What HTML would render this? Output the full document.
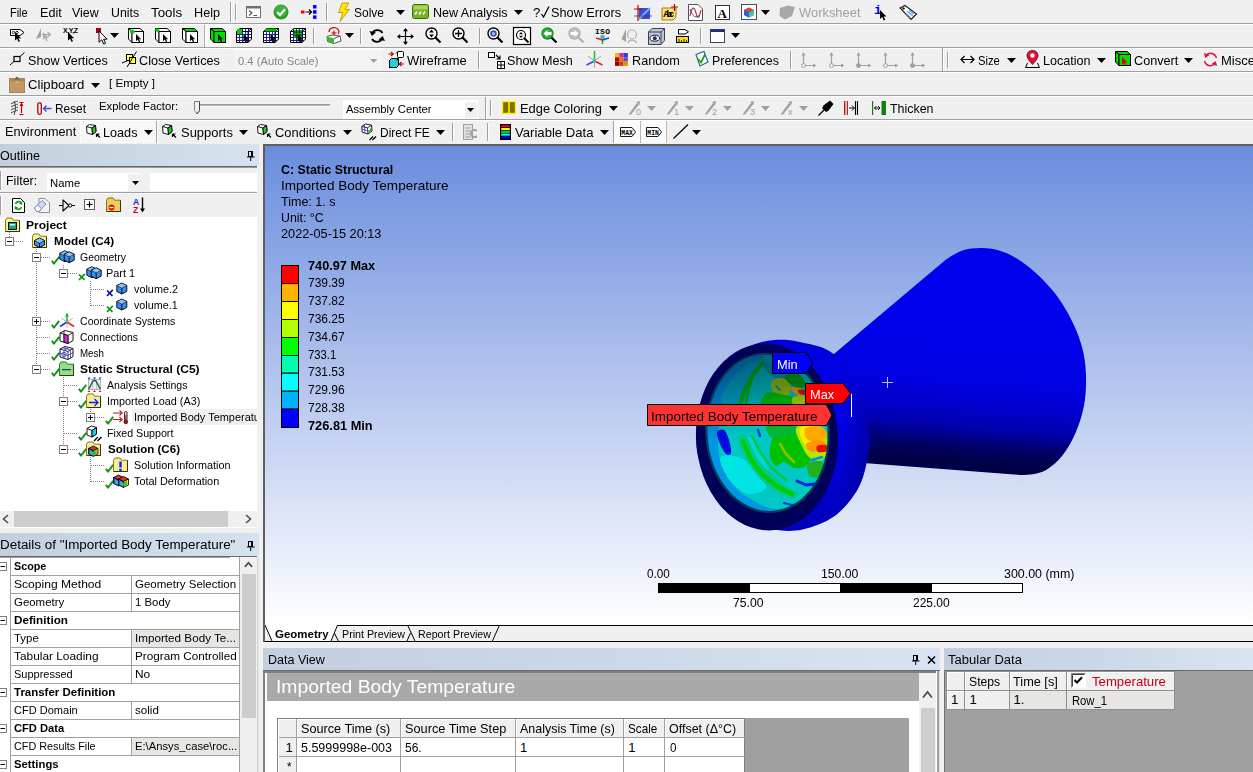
<!DOCTYPE html>
<html><head><meta charset="utf-8"><title>Mechanical</title>
<style>
html,body{margin:0;padding:0;}
body{width:1253px;height:772px;overflow:hidden;background:#f0f0f0;position:relative;font-family:"Liberation Sans",sans-serif;}
.r{position:absolute;display:block;}
.t{position:absolute;white-space:pre;transform-origin:0 0;display:block;}
</style></head><body>
<div class="r" style="left:0px;top:23px;width:1253px;height:1px;background:#a0a0a0;"></div>
<div class="r" style="left:0px;top:24px;width:1253px;height:1px;background:#ffffff;"></div>
<div class="r" style="left:0px;top:47px;width:1253px;height:1px;background:#a0a0a0;"></div>
<div class="r" style="left:0px;top:48px;width:1253px;height:1px;background:#ffffff;"></div>
<div class="r" style="left:0px;top:71px;width:1253px;height:1px;background:#a0a0a0;"></div>
<div class="r" style="left:0px;top:72px;width:1253px;height:1px;background:#ffffff;"></div>
<div class="r" style="left:0px;top:95px;width:1253px;height:1px;background:#a0a0a0;"></div>
<div class="r" style="left:0px;top:96px;width:1253px;height:1px;background:#ffffff;"></div>
<div class="r" style="left:0px;top:119px;width:1253px;height:1px;background:#a0a0a0;"></div>
<div class="r" style="left:0px;top:120px;width:1253px;height:1px;background:#ffffff;"></div>
<span class="t" style="left:10.00px;top:6.00px;font:normal 13px/13px 'Liberation Sans', sans-serif;color:#000;transform:scaleX(0.8406);">File</span>
<span class="t" style="left:39.60px;top:6.00px;font:normal 13px/13px 'Liberation Sans', sans-serif;color:#000;transform:scaleX(0.9698);">Edit</span>
<span class="t" style="left:72.30px;top:6.00px;font:normal 13px/13px 'Liberation Sans', sans-serif;color:#000;transform:scaleX(0.9536);">View</span>
<span class="t" style="left:110.60px;top:6.00px;font:normal 13px/13px 'Liberation Sans', sans-serif;color:#000;transform:scaleX(0.9485);">Units</span>
<span class="t" style="left:150.70px;top:6.00px;font:normal 13px/13px 'Liberation Sans', sans-serif;color:#000;transform:scaleX(1.0239);">Tools</span>
<span class="t" style="left:193.60px;top:6.00px;font:normal 13px/13px 'Liberation Sans', sans-serif;color:#000;transform:scaleX(0.9720);">Help</span>
<div class="r" style="left:230px;top:2px;width:1px;height:20px;background:#a0a0a0;"></div>
<div class="r" style="left:231px;top:2px;width:1px;height:20px;background:#fff;"></div>
<div class="r" style="left:235px;top:4px;width:1px;height:16px;background:#a0a0a0;"></div>
<div class="r" style="left:236px;top:4px;width:1px;height:16px;background:#fff;"></div>
<svg class="r" style="left:246px;top:6px;overflow:visible;" width="15" height="12" viewBox="0 0 15 12"><rect x="0.5" y="0.5" width="14" height="11" fill="#fff" stroke="#707070"/><rect x="0.5" y="0.5" width="14" height="2" fill="#707070"/><path d="M3 4.5L6 7L3 9.5M7.5 9.5H11" stroke="#505050" stroke-width="1.2" fill="none"/></svg>
<svg class="r" style="left:273px;top:4px;overflow:visible;" width="16" height="16" viewBox="0 0 16 16"><circle cx="8" cy="8" r="7.5" fill="#2a9a2a"/><circle cx="8" cy="7" r="6" fill="#4fc24f" opacity="0.6"/><path d="M4.2 8.2L7 11L12 5.2" stroke="#fff" stroke-width="2.2" fill="none"/></svg>
<svg class="r" style="left:301px;top:5px;overflow:visible;" width="16" height="14" viewBox="0 0 16 14"><rect x="0" y="5.5" width="3.5" height="3" fill="#ff0000"/><path d="M4.5 7H10M8 4.5L10.5 7L8 9.5" stroke="#000" stroke-width="1.2" fill="none"/><rect x="12" y="0" width="3.5" height="3.5" fill="#0000ff"/><rect x="12" y="5.2" width="3.5" height="3.5" fill="#0000ff"/><rect x="12" y="10.4" width="3.5" height="3.5" fill="#0000ff"/></svg>
<div class="r" style="left:326px;top:3px;width:1px;height:18px;background:#a0a0a0;"></div>
<div class="r" style="left:327px;top:3px;width:1px;height:18px;background:#fff;"></div>
<svg class="r" style="left:337px;top:3px;overflow:visible;" width="14" height="19" viewBox="0 0 14 19"><path d="M5 0H12L8 6.5H12.5L3 18.5L5.8 9.5H1.5Z" fill="#ffe800" stroke="#b89000" stroke-width="0.8"/></svg>
<span class="t" style="left:353.60px;top:6.00px;font:normal 13px/13px 'Liberation Sans', sans-serif;color:#000;transform:scaleX(0.9200);">Solve</span>
<svg class="r" style="left:395.8px;top:10px;" width="9" height="5" viewBox="0 0 9 5"><path d="M0 0H9L4.5 5Z" fill="#000"/></svg>
<svg class="r" style="left:412px;top:4px;overflow:visible;" width="17" height="15" viewBox="0 0 17 15"><rect x="0.5" y="0.5" width="16" height="14" rx="2" fill="#78b41e" stroke="#3c6e0a"/><rect x="1.5" y="1.5" width="14" height="4" fill="#a8d850"/><path d="M3 10.5L5 7.5M7 10.5L9 7.5M11 10.5L13 7.5" stroke="#fff" stroke-width="1.5"/></svg>
<span class="t" style="left:432.50px;top:6.00px;font:normal 13px/13px 'Liberation Sans', sans-serif;color:#000;transform:scaleX(0.9636);">New Analysis</span>
<svg class="r" style="left:513.5px;top:10px;" width="9" height="5" viewBox="0 0 9 5"><path d="M0 0H9L4.5 5Z" fill="#000"/></svg>
<span class="t" style="left:533.00px;top:6.00px;font:normal 13px/13px 'Liberation Sans', sans-serif;color:#000;transform:scaleX(1.0000);">?</span>
<svg class="r" style="left:541px;top:6px;overflow:visible;" width="9" height="12" viewBox="0 0 9 12"><path d="M0.5 8L2.5 11L8 0.5" stroke="#000" stroke-width="1.3" fill="none"/></svg>
<span class="t" style="left:550.50px;top:6.00px;font:normal 13px/13px 'Liberation Sans', sans-serif;color:#000;transform:scaleX(0.9790);">Show Errors</span>
<svg class="r" style="left:634px;top:5px;overflow:visible;" width="18" height="16" viewBox="0 0 18 16"><rect x="5" y="3" width="11" height="11" fill="#3050d0"/><path d="M5 14L16 3" stroke="#80a0ff" stroke-width="2"/><path d="M0 4H8M4 0V16" stroke="#c00000" stroke-width="1.2"/><path d="M0 11H18" stroke="#404040" stroke-width="0.8"/></svg>
<svg class="r" style="left:661px;top:4px;overflow:visible;" width="17" height="17" viewBox="0 0 17 17"><path d="M1 4H15V13L12 16H1Z" fill="#ffe070" stroke="#a08000"/><text x="2" y="13" font-size="9" font-family="Liberation Sans" font-weight="bold" fill="#000" textLength="11">Abc</text><path d="M10 3H17M13.5 0V7" stroke="#c00000" stroke-width="1.2"/></svg>
<svg class="r" style="left:688px;top:4px;overflow:visible;" width="15" height="17" viewBox="0 0 15 17"><path d="M0.5 0.5H10L14.5 5V16.5H0.5Z" fill="#fff" stroke="#505050"/><path d="M2 12C4 2 6 2 8 9S11 14 13 6" stroke="#d03030" stroke-width="1.2" fill="none"/><path d="M2 5C5 14 8 14 12 11" stroke="#3050c0" stroke-width="1" fill="none"/></svg>
<svg class="r" style="left:715px;top:5px;overflow:visible;" width="15" height="15" viewBox="0 0 15 15"><rect x="0.5" y="0.5" width="14" height="14" fill="#fff" stroke="#303030"/><text x="2.5" y="12.5" font-size="13" font-family="Liberation Serif" font-weight="bold" fill="#000">A</text></svg>
<svg class="r" style="left:741px;top:4px;overflow:visible;" width="16" height="16" viewBox="0 0 16 16"><rect x="0.5" y="0.5" width="15" height="15" fill="#fff" stroke="#505050"/><path d="M3 6L8 3.5L13 6V11L8 13.5L3 11Z" fill="#30a030"/><path d="M3 6L8 3.5L13 6L8 8.5Z" fill="#e04040"/><path d="M3 6L8 8.5V13.5L3 11Z" fill="#3060e0"/><path d="M8 8.5L13 6V11L8 13.5Z" fill="#40c0c0"/></svg>
<svg class="r" style="left:761px;top:10px;" width="9" height="5" viewBox="0 0 9 5"><path d="M0 0H9L4.5 5Z" fill="#000"/></svg>
<svg class="r" style="left:779px;top:5px;overflow:visible;" width="17" height="15" viewBox="0 0 17 15"><path d="M1 3L9 0.5L16 2L13 11L6 14.5L0.5 11Z" fill="#a8a8a8"/></svg>
<span class="t" style="left:799.00px;top:6.00px;font:normal 13px/13px 'Liberation Sans', sans-serif;color:#a0a0a0;transform:scaleX(0.9939);">Worksheet</span>
<svg class="r" style="left:874px;top:4px;overflow:visible;" width="16" height="17" viewBox="0 0 16 17"><text x="0" y="10" font-size="13" font-family="Liberation Mono" font-weight="bold" fill="#0000e0">i</text><path transform="translate(6 6) scale(1.0)" d="M0 0V9L2.2 7L3.8 10.5L5.2 9.8L3.7 6.5H6.5Z" fill="#000" stroke="none" stroke-width="0.8"/></svg>
<svg class="r" style="left:899px;top:5px;overflow:visible;" width="19" height="15" viewBox="0 0 19 15"><path d="M1 3L6 0.5L17.5 9L12 14.5Z" fill="#fff" stroke="#202020" stroke-width="1.2"/><circle cx="4.5" cy="3.5" r="1.2" fill="#202020"/><path d="M8 6L14 11M7 8.5L11.5 12.5M10 5L15 9" stroke="#60a0e0" stroke-width="1.2"/></svg>
<svg class="r" style="left:10px;top:28px;overflow:visible;" width="15" height="14" viewBox="0 0 15 14"><path d="M0.5 1.5H10L14 4.5L10 7.5H0.5Z" fill="#fff" stroke="#000"/><circle cx="3.5" cy="4.5" r="1.2" fill="none" stroke="#000" stroke-width="0.8"/><circle cx="7" cy="4.5" r="1.2" fill="none" stroke="#000" stroke-width="0.8"/><path transform="translate(5 4) scale(0.95)" d="M0 0V9L2.2 7L3.8 10.5L5.2 9.8L3.7 6.5H6.5Z" fill="#000" stroke="none" stroke-width="0.8"/></svg>
<svg class="r" style="left:36px;top:28px;overflow:visible;" width="16" height="14" viewBox="0 0 16 14"><path d="M5 0V9L0 11Z" fill="#a0a0a0"/><path d="M6 6.5H14M11.5 4L14.5 6.5L11.5 9" stroke="#a8a8a8" stroke-width="1.2" fill="none"/><path transform="translate(7 4) scale(0.9)" d="M0 0V9L2.2 7L3.8 10.5L5.2 9.8L3.7 6.5H6.5Z" fill="#b0b0b0" stroke="none" stroke-width="0.8"/></svg>
<svg class="r" style="left:63px;top:27px;overflow:visible;" width="16" height="15" viewBox="0 0 16 15"><text x="0" y="6" font-size="7" font-family="Liberation Sans" font-weight="bold" fill="#000" textLength="15">X,Y,Z</text><path transform="translate(5 5) scale(0.95)" d="M0 0V9L2.2 7L3.8 10.5L5.2 9.8L3.7 6.5H6.5Z" fill="#000" stroke="none" stroke-width="0.8"/></svg>
<svg class="r" style="left:96px;top:28px;overflow:visible;" width="12" height="17" viewBox="0 0 12 17"><rect x="0" y="0" width="5" height="5" fill="#a00020"/><path transform="translate(3 3) scale(1.25)" d="M0 0V9L2.2 7L3.8 10.5L5.2 9.8L3.7 6.5H6.5Z" fill="#fff" stroke="#000" stroke-width="0.8"/></svg>
<svg class="r" style="left:110px;top:33px;" width="9" height="5" viewBox="0 0 9 5"><path d="M0 0H9L4.5 5Z" fill="#000"/></svg>
<svg class="r" style="left:128px;top:28px;overflow:visible;" width="16" height="15" viewBox="0 0 16 15"><g transform="translate(16 0) scale(-1 1)"><path d="M0.5 3.5L4 0.5H15.5V11L12 14.5H0.5Z" fill="#fff"/><path d="M0.5 3.5L4 0.5H15.5L12 3.5Z" fill="#fff" stroke="#000" stroke-width="1"/><path d="M12 3.5L15.5 0.5V11L12 14.5Z" fill="#fff" stroke="#000" stroke-width="1"/><rect x="0.5" y="3.5" width="11.5" height="11" fill="#fff" stroke="#000" stroke-width="1"/></g><circle cx="4.2" cy="3.8" r="2.3" fill="#00d000"/><path transform="translate(8 6) scale(0.8)" d="M0 0V9L2.2 7L3.8 10.5L5.2 9.8L3.7 6.5H6.5Z" fill="#000" stroke="none" stroke-width="0.8"/></svg>
<svg class="r" style="left:154.5px;top:28px;overflow:visible;" width="16" height="15" viewBox="0 0 16 15"><g transform="translate(16 0) scale(-1 1)"><path d="M0.5 3.5L4 0.5H15.5V11L12 14.5H0.5Z" fill="#fff"/><path d="M0.5 3.5L4 0.5H15.5L12 3.5Z" fill="#fff" stroke="#000" stroke-width="1"/><path d="M12 3.5L15.5 0.5V11L12 14.5Z" fill="#fff" stroke="#000" stroke-width="1"/><rect x="0.5" y="3.5" width="11.5" height="11" fill="#fff" stroke="#000" stroke-width="1"/></g><path d="M0.8 0.8L4 3.5" stroke="#00d000" stroke-width="3"/><path transform="translate(8 6) scale(0.8)" d="M0 0V9L2.2 7L3.8 10.5L5.2 9.8L3.7 6.5H6.5Z" fill="#000" stroke="none" stroke-width="0.8"/></svg>
<svg class="r" style="left:182px;top:28px;overflow:visible;" width="16" height="15" viewBox="0 0 16 15"><g transform="translate(16 0) scale(-1 1)"><path d="M0.5 3.5L4 0.5H15.5V11L12 14.5H0.5Z" fill="#fff"/><path d="M0.5 3.5L4 0.5H15.5L12 3.5Z" fill="#00e000" stroke="#000" stroke-width="1"/><path d="M12 3.5L15.5 0.5V11L12 14.5Z" fill="#fff" stroke="#000" stroke-width="1"/><rect x="0.5" y="3.5" width="11.5" height="11" fill="#fff" stroke="#000" stroke-width="1"/></g><path transform="translate(8 6) scale(0.8)" d="M0 0V9L2.2 7L3.8 10.5L5.2 9.8L3.7 6.5H6.5Z" fill="#000" stroke="none" stroke-width="0.8"/></svg>
<div class="r" style="left:204px;top:25px;width:27px;height:22px;background:#fafafa;"></div>
<div class="r" style="left:204px;top:25px;width:1px;height:22px;background:#b0b0b0;"></div>
<div class="r" style="left:230px;top:25px;width:1px;height:22px;background:#fff;"></div>
<svg class="r" style="left:209.5px;top:28px;overflow:visible;" width="16" height="15" viewBox="0 0 16 15"><g transform="translate(16 0) scale(-1 1)"><path d="M0.5 3.5L4 0.5H15.5V11L12 14.5H0.5Z" fill="#fff"/><path d="M0.5 3.5L4 0.5H15.5L12 3.5Z" fill="#00e000" stroke="#000" stroke-width="1"/><path d="M12 3.5L15.5 0.5V11L12 14.5Z" fill="#00e000" stroke="#000" stroke-width="1"/><rect x="0.5" y="3.5" width="11.5" height="11" fill="#00e000" stroke="#000" stroke-width="1"/></g><path transform="translate(8 6) scale(0.8)" d="M0 0V9L2.2 7L3.8 10.5L5.2 9.8L3.7 6.5H6.5Z" fill="#000" stroke="none" stroke-width="0.8"/></svg>
<svg class="r" style="left:236px;top:28px;overflow:visible;" width="16" height="15" viewBox="0 0 16 15"><pattern id="mpv" width="3" height="3" patternUnits="userSpaceOnUse"><rect width="3" height="3" fill="#fff"/><path d="M0 0.5H3M0.5 0V3" stroke="#2020a0" stroke-width="1"/></pattern><path d="M0.5 3.5L4 0.5H15.5V11L12 14.5H0.5Z" fill="url(#mpv)" stroke="#000"/><path d="M0.5 3.5H12V14.5M12 3.5L15.5 0.5" stroke="#000" fill="none"/><rect x="1" y="1" width="5" height="5" fill="#00d000"/><path transform="translate(7.5 6) scale(0.85)" d="M0 0V9L2.2 7L3.8 10.5L5.2 9.8L3.7 6.5H6.5Z" fill="#000" stroke="none" stroke-width="0.8"/></svg>
<svg class="r" style="left:263px;top:28px;overflow:visible;" width="16" height="15" viewBox="0 0 16 15"><pattern id="mpe" width="3" height="3" patternUnits="userSpaceOnUse"><rect width="3" height="3" fill="#fff"/><path d="M0 0.5H3M0.5 0V3" stroke="#2020a0" stroke-width="1"/></pattern><path d="M0.5 3.5L4 0.5H15.5V11L12 14.5H0.5Z" fill="url(#mpe)" stroke="#000"/><path d="M0.5 3.5H12V14.5M12 3.5L15.5 0.5" stroke="#000" fill="none"/><path d="M2.5 2H13" stroke="#00c000" stroke-width="3"/><path transform="translate(7.5 6) scale(0.85)" d="M0 0V9L2.2 7L3.8 10.5L5.2 9.8L3.7 6.5H6.5Z" fill="#000" stroke="none" stroke-width="0.8"/></svg>
<svg class="r" style="left:290px;top:28px;overflow:visible;" width="16" height="15" viewBox="0 0 16 15"><pattern id="mpf" width="3" height="3" patternUnits="userSpaceOnUse"><rect width="3" height="3" fill="#fff"/><path d="M0 0.5H3M0.5 0V3" stroke="#2020a0" stroke-width="1"/></pattern><path d="M0.5 3.5L4 0.5H15.5V11L12 14.5H0.5Z" fill="url(#mpf)" stroke="#000"/><path d="M0.5 3.5H12V14.5M12 3.5L15.5 0.5" stroke="#000" fill="none"/><rect x="4" y="2" width="8" height="8" fill="#00a000" opacity="0.85"/><path d="M4 4.5H12M4 7.5H12M6.5 2V10M9.5 2V10" stroke="#004000" stroke-width="0.7"/><path transform="translate(7.5 6) scale(0.85)" d="M0 0V9L2.2 7L3.8 10.5L5.2 9.8L3.7 6.5H6.5Z" fill="#000" stroke="none" stroke-width="0.8"/></svg>
<div class="r" style="left:313px;top:28px;width:1px;height:16px;background:#a0a0a0;"></div>
<div class="r" style="left:314px;top:28px;width:1px;height:16px;background:#fff;"></div>
<svg class="r" style="left:326px;top:27px;overflow:visible;" width="18" height="17" viewBox="0 0 18 17"><path d="M3 5A5 4 0 1 1 12 7" stroke="#c00000" stroke-width="1.2" fill="none"/><path d="M5.5 6H10.5M8 3.5V8.5" stroke="#c00000" stroke-width="1.1"/><path d="M1 9.5L6 8L14 9L15 14L8 16.5L1.5 14.5Z" fill="#fff" stroke="#404040" stroke-width="0.9"/><path d="M1 9.5L8 11.5V16.5L1.5 14.5Z" fill="#30c030"/><path d="M8 11.5L14 9" stroke="#404040" stroke-width="0.9"/></svg>
<svg class="r" style="left:345px;top:33px;" width="9" height="5" viewBox="0 0 9 5"><path d="M0 0H9L4.5 5Z" fill="#000"/></svg>
<div class="r" style="left:360px;top:28px;width:1px;height:16px;background:#a0a0a0;"></div>
<div class="r" style="left:361px;top:28px;width:1px;height:16px;background:#fff;"></div>
<svg class="r" style="left:369px;top:28px;overflow:visible;" width="17" height="16" viewBox="0 0 17 16"><path d="M13.5 5A6 6 0 0 0 3 5.5" stroke="#000" stroke-width="1.7" fill="none"/><path d="M0.5 3L2.8 8L7 4.5Z" fill="#000"/><path d="M3 11A6 6 0 0 0 13.5 10.5" stroke="#000" stroke-width="1.7" fill="none"/><path d="M16 13L13.7 8L9.5 11.5Z" fill="#000"/></svg>
<svg class="r" style="left:397px;top:28px;overflow:visible;" width="17" height="17" viewBox="0 0 17 17"><path d="M8.5 1V16M1 8.5H16" stroke="#000" stroke-width="1.2"/><path d="M8.5 0L6 3.2H11ZM8.5 17L6 13.8H11ZM0 8.5L3.2 6V11ZM17 8.5L13.8 6V11Z" fill="#000"/></svg>
<svg class="r" style="left:425px;top:27px;overflow:visible;" width="17" height="17" viewBox="0 0 17 17"><circle cx="6.5" cy="6.5" r="5.5" fill="#fff" stroke="#000" stroke-width="1.4"/><path d="M10.5 10.5L15.5 15.5" stroke="#000" stroke-width="2.2"/><path d="M6.5 2.5L4 5.5H9ZM6.5 10.5L4 7.5H9Z" fill="#000"/></svg>
<svg class="r" style="left:452px;top:27px;overflow:visible;" width="17" height="17" viewBox="0 0 17 17"><circle cx="6.5" cy="6.5" r="5.5" fill="#fff" stroke="#000" stroke-width="1.4"/><path d="M10.5 10.5L15.5 15.5" stroke="#000" stroke-width="2.2"/><path d="M3 6.5H10M6.5 3V10" stroke="#000" stroke-width="1.3"/></svg>
<div class="r" style="left:479px;top:28px;width:1px;height:16px;background:#a0a0a0;"></div>
<div class="r" style="left:480px;top:28px;width:1px;height:16px;background:#fff;"></div>
<svg class="r" style="left:487px;top:27px;overflow:visible;" width="17" height="17" viewBox="0 0 17 17"><circle cx="6.5" cy="6.5" r="5.5" fill="#fff" stroke="#000" stroke-width="1.4"/><path d="M10.5 10.5L15.5 15.5" stroke="#000" stroke-width="2.2"/><circle cx="6.5" cy="6.5" r="3.3" fill="#3060d0"/><path d="M4.5 5.5L6.5 4.5L8.5 5.5V7.8L6.5 8.8L4.5 7.8Z" fill="#a0c0ff" stroke="#102060" stroke-width="0.6"/></svg>
<svg class="r" style="left:513px;top:27px;overflow:visible;" width="18" height="18" viewBox="0 0 18 18"><rect x="0.5" y="0.5" width="17" height="17" fill="#fff" stroke="#000" stroke-width="1.2"/><circle cx="8" cy="8" r="4.5" fill="#fff" stroke="#000" stroke-width="1.2"/><path d="M11 11L15.5 15.5" stroke="#000" stroke-width="2"/><path d="M8 5L6 7.3H10ZM8 11L6 8.7H10Z" fill="#000"/></svg>
<svg class="r" style="left:541px;top:27px;overflow:visible;" width="17" height="17" viewBox="0 0 17 17"><circle cx="6.5" cy="6.5" r="5.5" fill="#30b030" stroke="#209020" stroke-width="1.4"/><path d="M10.5 10.5L15.5 15.5" stroke="#000" stroke-width="2.2"/><path d="M2.5 6.5L6.5 3V5H10.5V8H6.5V10Z" fill="#fff"/></svg>
<svg class="r" style="left:568px;top:27px;overflow:visible;" width="17" height="17" viewBox="0 0 17 17"><circle cx="6.5" cy="6.5" r="5.5" fill="#c0c0c0" stroke="#b0b0b0" stroke-width="1.4"/><path d="M10.5 10.5L15.5 15.5" stroke="#b0b0b0" stroke-width="2.2"/><path d="M10.5 6.5L6.5 3V5H2.5V8H6.5V10Z" fill="#fff"/></svg>
<svg class="r" style="left:594px;top:27px;overflow:visible;" width="17" height="18" viewBox="0 0 17 18"><text x="1" y="7" font-size="8" font-family="Liberation Mono" font-weight="bold" fill="#000" textLength="15">ISO</text><circle cx="8.5" cy="10" r="2.3" fill="#30c0c0"/><path d="M8.5 12V17" stroke="#20a020" stroke-width="1.5"/><path d="M8.5 13L2 11" stroke="#e02020" stroke-width="1.5"/><path d="M8.5 13L15 11" stroke="#2040e0" stroke-width="1.5"/></svg>
<svg class="r" style="left:621px;top:28px;overflow:visible;" width="17" height="16" viewBox="0 0 17 16"><path d="M5 1V14L0.5 11Z" fill="#a0a0a0"/><circle cx="11" cy="6.5" r="4.5" fill="none" stroke="#b0b0b0" stroke-width="1.2"/><path d="M7 15C8 11 14 11 15.5 15" stroke="#b0b0b0" stroke-width="1.2" fill="none"/></svg>
<svg class="r" style="left:648px;top:28px;overflow:visible;" width="17" height="17" viewBox="0 0 17 17"><path d="M0.5 4L4 0.5H16.5V12.5L13 16.5H0.5Z" fill="#b8c8e0" stroke="#404040"/><path d="M0.5 4H13V16.5M13 4L16.5 0.5" stroke="#404040" fill="none"/><ellipse cx="6.8" cy="10.2" rx="5" ry="3" fill="#fff" stroke="#000" stroke-width="0.9"/><circle cx="6.8" cy="10.2" r="2" fill="#203060"/></svg>
<svg class="r" style="left:676px;top:29px;overflow:visible;" width="14" height="15" viewBox="0 0 14 15"><path d="M2.5 0.5H9L12.5 2.8L9 5H2.5Z" fill="#fff" stroke="#000"/><rect x="0.5" y="7.5" width="12" height="6" fill="#ffe000" stroke="#000"/><path d="M3 10V13.5M5.5 11V13.5M8 10V13.5M10.5 11V13.5" stroke="#000" stroke-width="0.8"/></svg>
<div class="r" style="left:700px;top:28px;width:1px;height:16px;background:#a0a0a0;"></div>
<div class="r" style="left:701px;top:28px;width:1px;height:16px;background:#fff;"></div>
<svg class="r" style="left:710px;top:29px;overflow:visible;" width="15" height="14" viewBox="0 0 15 14"><rect x="0.5" y="0.5" width="14" height="13" fill="#fff" stroke="#404060"/><rect x="0.5" y="0.5" width="14" height="2.5" fill="#203080"/></svg>
<svg class="r" style="left:731px;top:33px;" width="9" height="5" viewBox="0 0 9 5"><path d="M0 0H9L4.5 5Z" fill="#000"/></svg>
<svg class="r" style="left:10px;top:52px;overflow:visible;" width="15" height="14" viewBox="0 0 15 14"><rect x="4" y="4.5" width="6" height="5" fill="#f0f0f0" stroke="#000" stroke-width="1.2"/><path d="M0 13L4 9.5M10 4.5L14.5 0.5" stroke="#000" stroke-width="1"/></svg>
<span class="t" style="left:27.60px;top:54.00px;font:normal 13px/13px 'Liberation Sans', sans-serif;color:#000;transform:scaleX(0.9675);">Show Vertices</span>
<svg class="r" style="left:122px;top:51px;overflow:visible;" width="15" height="17" viewBox="0 0 15 17"><rect x="4.5" y="3.5" width="6" height="6" fill="#ffff40" stroke="#000"/><rect x="7.5" y="6.5" width="6" height="6" fill="#ffff40" stroke="#000"/><path d="M0 12L6 9.5M5 16L14.5 0.5" stroke="#000" stroke-width="1"/></svg>
<span class="t" style="left:139.20px;top:54.00px;font:normal 13px/13px 'Liberation Sans', sans-serif;color:#000;transform:scaleX(0.9732);">Close Vertices</span>
<div class="r" style="left:234px;top:49px;width:148px;height:21px;background:#f4f4f4;"></div>
<div class="r" style="left:234px;top:49px;width:148px;height:1px;background:#fff;"></div>
<span class="t" style="left:237.50px;top:56.00px;font:normal 11px/11px 'Liberation Sans', sans-serif;color:#868686;transform:scaleX(1.0206);">0.4 (Auto Scale)</span>
<svg class="r" style="left:369.5px;top:58.5px;" width="7.5" height="4" viewBox="0 0 7.5 4"><path d="M0 0H7.5L3.75 4Z" fill="#a0a0a0"/></svg>
<svg class="r" style="left:388px;top:51px;overflow:visible;" width="17" height="17" viewBox="0 0 17 17"><rect x="9.5" y="0.5" width="6" height="6" rx="1" fill="#fff" stroke="#000"/><path d="M8 2.5L10 0.5H14" stroke="#000" fill="none"/><rect x="1.5" y="9.5" width="7" height="7" fill="#20d0e0" stroke="#000"/><path d="M1.5 9.5L3.5 7.5H10.5V14.5L8.5 16.5M8.5 9.5L10.5 7.5" stroke="#000" fill="#20d0e0"/><path d="M0.5 3H5M3 1L5.2 3L3 5" stroke="#c00000" stroke-width="1.2" fill="none"/><path d="M16 13H11.5M13.5 11L11.3 13L13.5 15" stroke="#c00000" stroke-width="1.2" fill="none"/></svg>
<span class="t" style="left:406.50px;top:54.00px;font:normal 13px/13px 'Liberation Sans', sans-serif;color:#000;transform:scaleX(0.9977);">Wireframe</span>
<div class="r" style="left:478px;top:51px;width:1px;height:18px;background:#a0a0a0;"></div>
<div class="r" style="left:479px;top:51px;width:1px;height:18px;background:#fff;"></div>
<svg class="r" style="left:488px;top:52px;overflow:visible;" width="17" height="17" viewBox="0 0 17 17"><rect x="0.5" y="0.5" width="6" height="5" fill="#fff" stroke="#000"/><path d="M8 3L12 7M12 3.5V7H8.5" stroke="#000" stroke-width="1.1" fill="none"/><rect x="9.5" y="9.5" width="7" height="7" fill="#fff" stroke="#000"/><path d="M13 9.5V16.5M9.5 13H16.5" stroke="#000"/></svg>
<span class="t" style="left:506.60px;top:54.00px;font:normal 13px/13px 'Liberation Sans', sans-serif;color:#000;transform:scaleX(0.9700);">Show Mesh</span>
<svg class="r" style="left:586px;top:51px;overflow:visible;" width="17" height="18" viewBox="0 0 17 18"><path d="M8.5 10V0" stroke="#30b030" stroke-width="1.5"/><path d="M8.5 10L0.5 14" stroke="#3040e0" stroke-width="1.5"/><path d="M8.5 10L16.5 14" stroke="#e02020" stroke-width="1.5"/><path d="M8.5 10V17M8.5 10L15 5M8.5 10L2 5" stroke="#909090" stroke-width="0.8"/><circle cx="8.5" cy="10" r="1.8" fill="#30c0c0"/></svg>
<svg class="r" style="left:614.5px;top:53px;overflow:visible;" width="13" height="13" viewBox="0 0 13 13"><rect x="0.0" y="0.0" width="4.3" height="4.3" fill="#e8c000"/><rect x="4.3" y="0.0" width="4.3" height="4.3" fill="#d020c0"/><rect x="8.6" y="0.0" width="4.3" height="4.3" fill="#2040e0"/><rect x="0.0" y="4.3" width="4.3" height="4.3" fill="#c00000"/><rect x="4.3" y="4.3" width="4.3" height="4.3" fill="#e07000"/><rect x="8.6" y="4.3" width="4.3" height="4.3" fill="#8040c0"/><rect x="0.0" y="8.6" width="4.3" height="4.3" fill="#a00000"/><rect x="4.3" y="8.6" width="4.3" height="4.3" fill="#c04000"/><rect x="8.6" y="8.6" width="4.3" height="4.3" fill="#e09000"/></svg>
<span class="t" style="left:631.70px;top:54.00px;font:normal 13px/13px 'Liberation Sans', sans-serif;color:#000;transform:scaleX(0.9730);">Random</span>
<svg class="r" style="left:693px;top:51px;overflow:visible;" width="16" height="16" viewBox="0 0 16 16"><path d="M3 3.5L11 0.5L15 11L7 15Z" fill="#fff" stroke="#206080" stroke-width="1.1"/><path d="M5 8L8 11.5L12 3.5" stroke="#20a020" stroke-width="1.8" fill="none"/></svg>
<span class="t" style="left:711.60px;top:54.00px;font:normal 13px/13px 'Liberation Sans', sans-serif;color:#000;transform:scaleX(0.9540);">Preferences</span>
<div class="r" style="left:790px;top:51px;width:1px;height:18px;background:#a0a0a0;"></div>
<div class="r" style="left:791px;top:51px;width:1px;height:18px;background:#fff;"></div>
<svg class="r" style="left:800px;top:52px;overflow:visible;" width="17" height="17" viewBox="0 0 17 17"><path d="M3.5 2V11.5M5.5 13.5H15" stroke="#a0a0a0" stroke-width="1.2" fill="none"/><path d="M3.5 0L1.5 3.5H5.5ZM16.5 13.5L13 11.5V15.5Z" fill="#a0a0a0"/><circle cx="3.5" cy="13.5" r="2" fill="none" stroke="#a0a0a0"/></svg>
<svg class="r" style="left:827.5px;top:52px;overflow:visible;" width="17" height="17" viewBox="0 0 17 17"><path d="M3.5 2V11.5M5.5 13.5H15" stroke="#a0a0a0" stroke-width="1.2" fill="none"/><path d="M3.5 0L1.5 3.5H5.5ZM16.5 13.5L13 11.5V15.5Z" fill="#a0a0a0"/><circle cx="3.5" cy="13.5" r="2" fill="none" stroke="#a0a0a0"/></svg>
<svg class="r" style="left:854.5px;top:52px;overflow:visible;" width="17" height="17" viewBox="0 0 17 17"><path d="M3.5 2V11.5M5.5 13.5H15" stroke="#a0a0a0" stroke-width="1.2" fill="none"/><path d="M3.5 0L1.5 3.5H5.5ZM16.5 13.5L13 11.5V15.5Z" fill="#a0a0a0"/><circle cx="3.5" cy="13.5" r="2" fill="#a0a0a0" stroke="#a0a0a0"/></svg>
<svg class="r" style="left:882px;top:52px;overflow:visible;" width="17" height="17" viewBox="0 0 17 17"><path d="M3.5 2V11.5M5.5 13.5H15" stroke="#a0a0a0" stroke-width="1.2" fill="none"/><path d="M3.5 0L1.5 3.5H5.5ZM16.5 13.5L13 11.5V15.5Z" fill="#a0a0a0"/><circle cx="3.5" cy="13.5" r="2" fill="none" stroke="#a0a0a0"/></svg>
<svg class="r" style="left:908.5px;top:52px;overflow:visible;" width="17" height="17" viewBox="0 0 17 17"><path d="M3.5 2V11.5M5.5 13.5H15" stroke="#a0a0a0" stroke-width="1.2" fill="none"/><path d="M3.5 0L1.5 3.5H5.5ZM16.5 13.5L13 11.5V15.5Z" fill="#a0a0a0"/><circle cx="3.5" cy="13.5" r="2" fill="#a0a0a0" stroke="#a0a0a0"/></svg>
<div class="r" style="left:942px;top:48px;width:1px;height:23px;background:#a0a0a0;"></div>
<div class="r" style="left:943px;top:48px;width:1px;height:23px;background:#fff;"></div>
<div class="r" style="left:947px;top:52px;width:1px;height:16px;background:#a0a0a0;"></div>
<div class="r" style="left:948px;top:52px;width:1px;height:16px;background:#fff;"></div>
<svg class="r" style="left:960px;top:55px;overflow:visible;" width="15" height="9" viewBox="0 0 15 9"><path d="M1 4.5H14M4.5 1L1 4.5L4.5 8M10.5 1L14 4.5L10.5 8" stroke="#000" stroke-width="1.2" fill="none"/></svg>
<span class="t" style="left:977.70px;top:54.00px;font:normal 13px/13px 'Liberation Sans', sans-serif;color:#000;transform:scaleX(0.8652);">Size</span>
<svg class="r" style="left:1006.5px;top:58px;" width="9" height="5" viewBox="0 0 9 5"><path d="M0 0H9L4.5 5Z" fill="#000"/></svg>
<svg class="r" style="left:1025px;top:50px;overflow:visible;" width="15" height="18" viewBox="0 0 15 18"><path d="M7.5 0.5C3.5 0.5 2 3.5 2 5.8C2 9 7.5 14.5 7.5 14.5S13 9 13 5.8C13 3.5 11.5 0.5 7.5 0.5Z" fill="#e01030" stroke="#600010" stroke-width="0.8"/><circle cx="7.5" cy="5.5" r="2.2" fill="#fff"/><path d="M0.5 17.5H14.5M0.5 17.5L2.5 13M14.5 17.5L12.5 13" stroke="#000" stroke-width="1" fill="none"/></svg>
<span class="t" style="left:1042.70px;top:54.00px;font:normal 13px/13px 'Liberation Sans', sans-serif;color:#000;transform:scaleX(0.9690);">Location</span>
<svg class="r" style="left:1097px;top:58px;" width="9" height="5" viewBox="0 0 9 5"><path d="M0 0H9L4.5 5Z" fill="#000"/></svg>
<svg class="r" style="left:1115px;top:51px;overflow:visible;" width="16" height="17" viewBox="0 0 16 17"><g transform="translate(16 0) scale(-1 1)"><path d="M0.5 3.5L4 0.5H15.5V11L12 14.5H0.5Z" fill="#fff"/><path d="M0.5 3.5L4 0.5H15.5L12 3.5Z" fill="#00e000" stroke="#000" stroke-width="1"/><path d="M12 3.5L15.5 0.5V11L12 14.5Z" fill="#00e000" stroke="#000" stroke-width="1"/><rect x="0.5" y="3.5" width="11.5" height="11" fill="#00e000" stroke="#000" stroke-width="1"/></g><path transform="translate(7 6) scale(0.85)" d="M0 0V9L2.2 7L3.8 10.5L5.2 9.8L3.7 6.5H6.5Z" fill="#e00000" stroke="none" stroke-width="0.8"/></svg>
<span class="t" style="left:1133.70px;top:54.00px;font:normal 13px/13px 'Liberation Sans', sans-serif;color:#000;transform:scaleX(0.9736);">Convert</span>
<svg class="r" style="left:1184px;top:58px;" width="9" height="5" viewBox="0 0 9 5"><path d="M0 0H9L4.5 5Z" fill="#000"/></svg>
<svg class="r" style="left:1203px;top:52px;overflow:visible;" width="15" height="15" viewBox="0 0 15 15"><path d="M13.5 6A6 6 0 0 0 3 3.5" stroke="#e01040" stroke-width="1.4" fill="none"/><path d="M0.8 1L2.5 6L6.5 3Z" fill="#e01040"/><path d="M1.5 9A6 6 0 0 0 12 11.5" stroke="#e01040" stroke-width="1.4" fill="none"/><path d="M14.2 14L12.5 9L8.5 12Z" fill="#e01040"/></svg>
<span class="t" style="left:1220.50px;top:54.00px;font:normal 13px/13px 'Liberation Sans', sans-serif;color:#000;transform:scaleX(1.0015);">Miscellaneous</span>
<svg class="r" style="left:9px;top:76px;overflow:visible;" width="16" height="17" viewBox="0 0 16 17"><rect x="0.5" y="2.5" width="15" height="14" fill="#c09860" stroke="#a08860"/><rect x="0.5" y="2.5" width="15" height="3" fill="#b08850"/><path d="M5 3.5L8 0.5L11 3.5Z" fill="#606060"/><rect x="6.5" y="5.5" width="3" height="1.3" fill="#e0c080"/></svg>
<span class="t" style="left:27.60px;top:78.00px;font:normal 13px/13px 'Liberation Sans', sans-serif;color:#000;transform:scaleX(1.0103);">Clipboard</span>
<svg class="r" style="left:90.5px;top:83px;" width="9" height="5" viewBox="0 0 9 5"><path d="M0 0H9L4.5 5Z" fill="#000"/></svg>
<span class="t" style="left:108.50px;top:78.00px;font:normal 11px/11px 'Liberation Sans', sans-serif;color:#000;transform:scaleX(1.0605);">[ Empty ]</span>
<svg class="r" style="left:10px;top:100px;overflow:visible;" width="14" height="16" viewBox="0 0 14 16"><path d="M1 4C4 2 6 2 8 1M1 7C4 5 6 5 8 4M1 10C4 8 6 8 8 7M1 13C4 11 6 11 8 10M4 1C6 5 6 10 4 15" stroke="#404040" stroke-width="1" fill="none"/><path d="M11.5 4V13M9.5 2.5H13.5M9.5 14.5H13.5" stroke="#c00000" stroke-width="1.2"/><path d="M11.5 2.5L9.5 6H13.5Z" fill="#c00000"/></svg>
<svg class="r" style="left:36.5px;top:102px;overflow:visible;" width="15" height="13" viewBox="0 0 15 13"><rect x="0.8" y="0.8" width="3.5" height="11.5" rx="1.5" fill="none" stroke="#b00000" stroke-width="1.3"/><path d="M6.5 6.5H14.5M9.5 3.5L6.5 6.5L9.5 9.5" stroke="#4050d0" stroke-width="1.4" fill="none"/></svg>
<span class="t" style="left:55.00px;top:102.00px;font:normal 13px/13px 'Liberation Sans', sans-serif;color:#000;transform:scaleX(0.9134);">Reset</span>
<span class="t" style="left:98.80px;top:101.00px;font:normal 10.5px/10.5px 'Liberation Sans', sans-serif;color:#000;transform:scaleX(1.0766);">Explode Factor:</span>
<div class="r" style="left:200px;top:104px;width:130px;height:1px;background:#9a9a9a;"></div>
<div class="r" style="left:200px;top:105px;width:130px;height:1px;background:#b8b8b8;"></div>
<div class="r" style="left:200px;top:106px;width:130px;height:1px;background:#fff;"></div>
<svg class="r" style="left:194px;top:101px;overflow:visible;" width="7" height="14" viewBox="0 0 7 14"><path d="M0.5 0.5H5.5V9.5L3 13L0.5 9.5Z" fill="#f0f0f0" stroke="#808080"/><path d="M5.5 0.5V9.5L3 13" stroke="#404040" fill="none"/></svg>
<div class="r" style="left:343px;top:100px;width:134.5px;height:19px;background:#fff;"></div>
<span class="t" style="left:345.80px;top:104.00px;font:normal 10.5px/10.5px 'Liberation Sans', sans-serif;color:#000;transform:scaleX(1.0696);">Assembly Center</span>
<div class="r" style="left:464.5px;top:101.5px;width:12.5px;height:16px;background:#f0f0f0;"></div>
<svg class="r" style="left:467px;top:108px;" width="7" height="4" viewBox="0 0 7 4"><path d="M0 0H7L3.5 4Z" fill="#000"/></svg>
<div class="r" style="left:485px;top:97px;width:1px;height:22px;background:#a0a0a0;"></div>
<div class="r" style="left:486px;top:97px;width:1px;height:22px;background:#fff;"></div>
<div class="r" style="left:490px;top:100px;width:1px;height:16px;background:#a0a0a0;"></div>
<div class="r" style="left:491px;top:100px;width:1px;height:16px;background:#fff;"></div>
<svg class="r" style="left:502px;top:101px;overflow:visible;" width="14" height="13" viewBox="0 0 14 13"><rect x="0" y="0" width="14" height="13" fill="#fff000"/><rect x="1.2" y="1.2" width="5" height="10.6" fill="#807000"/><rect x="7.8" y="1.2" width="5" height="10.6" fill="#807000"/></svg>
<span class="t" style="left:520.00px;top:102.00px;font:normal 13px/13px 'Liberation Sans', sans-serif;color:#000;transform:scaleX(0.9942);">Edge Coloring</span>
<svg class="r" style="left:608.8px;top:106px;" width="9" height="5" viewBox="0 0 9 5"><path d="M0 0H9L4.5 5Z" fill="#000"/></svg>
<svg class="r" style="left:627.5px;top:100px;overflow:visible;" width="16" height="16" viewBox="0 0 16 16"><path d="M0.5 14.5L9 3L11 4.5L3 14.5Z" fill="#a0a0a0"/><path d="M8 2L12 1L11.5 5Z" fill="#a0a0a0"/><text x="8" y="15" font-size="9" font-family="Liberation Sans" fill="#a0a0a0">0</text></svg>
<svg class="r" style="left:646.5px;top:106px;" width="9" height="5" viewBox="0 0 9 5"><path d="M0 0H9L4.5 5Z" fill="#a0a0a0"/></svg>
<svg class="r" style="left:665.5px;top:100px;overflow:visible;" width="16" height="16" viewBox="0 0 16 16"><path d="M0.5 14.5L9 3L11 4.5L3 14.5Z" fill="#a0a0a0"/><path d="M8 2L12 1L11.5 5Z" fill="#a0a0a0"/><text x="8" y="15" font-size="9" font-family="Liberation Sans" fill="#a0a0a0">1</text></svg>
<svg class="r" style="left:684.5px;top:106px;" width="9" height="5" viewBox="0 0 9 5"><path d="M0 0H9L4.5 5Z" fill="#a0a0a0"/></svg>
<svg class="r" style="left:703.5px;top:100px;overflow:visible;" width="16" height="16" viewBox="0 0 16 16"><path d="M0.5 14.5L9 3L11 4.5L3 14.5Z" fill="#a0a0a0"/><path d="M8 2L12 1L11.5 5Z" fill="#a0a0a0"/><text x="8" y="15" font-size="9" font-family="Liberation Sans" fill="#a0a0a0">2</text></svg>
<svg class="r" style="left:722.5px;top:106px;" width="9" height="5" viewBox="0 0 9 5"><path d="M0 0H9L4.5 5Z" fill="#a0a0a0"/></svg>
<svg class="r" style="left:741.5px;top:100px;overflow:visible;" width="16" height="16" viewBox="0 0 16 16"><path d="M0.5 14.5L9 3L11 4.5L3 14.5Z" fill="#a0a0a0"/><path d="M8 2L12 1L11.5 5Z" fill="#a0a0a0"/><text x="8" y="15" font-size="9" font-family="Liberation Sans" fill="#a0a0a0">3</text></svg>
<svg class="r" style="left:760.5px;top:106px;" width="9" height="5" viewBox="0 0 9 5"><path d="M0 0H9L4.5 5Z" fill="#a0a0a0"/></svg>
<svg class="r" style="left:779.5px;top:100px;overflow:visible;" width="16" height="16" viewBox="0 0 16 16"><path d="M0.5 14.5L9 3L11 4.5L3 14.5Z" fill="#a0a0a0"/><path d="M8 2L12 1L11.5 5Z" fill="#a0a0a0"/><text x="8" y="15" font-size="9" font-family="Liberation Sans" fill="#a0a0a0">x</text></svg>
<svg class="r" style="left:798.5px;top:106px;" width="9" height="5" viewBox="0 0 9 5"><path d="M0 0H9L4.5 5Z" fill="#a0a0a0"/></svg>
<svg class="r" style="left:818px;top:100px;overflow:visible;" width="16" height="16" viewBox="0 0 16 16"><path d="M0.5 15.5L7 9" stroke="#000" stroke-width="1.3"/><path d="M4 8L8 12L10.5 10.5L15.5 4L12 0.5L5.5 5.5Z" fill="#000"/></svg>
<svg class="r" style="left:843.5px;top:101px;overflow:visible;" width="14" height="14" viewBox="0 0 14 14"><path d="M0.7 0V14" stroke="#c00000" stroke-width="1.3"/><path d="M3.3 0V14" stroke="#900000" stroke-width="1"/><path d="M5 7H10M8 4.5L10.5 7L8 9.5" stroke="#000" stroke-width="1" fill="none"/><path d="M11.5 0V14M13.5 0V14" stroke="#000" stroke-width="1.1"/></svg>
<svg class="r" style="left:872px;top:101px;overflow:visible;" width="14" height="14" viewBox="0 0 14 14"><path d="M0.6 0V14" stroke="#108010" stroke-width="1.2"/><path d="M2.5 7H8M4.5 5L2.5 7L4.5 9M6 5L8 7L6 9" stroke="#000" stroke-width="0.9" fill="none"/><rect x="9.5" y="0" width="4.5" height="14" fill="#108010"/></svg>
<span class="t" style="left:889.50px;top:102.00px;font:normal 13px/13px 'Liberation Sans', sans-serif;color:#000;transform:scaleX(0.9560);">Thicken</span>
<span class="t" style="left:4.60px;top:125.00px;font:normal 13px/13px 'Liberation Sans', sans-serif;color:#000;transform:scaleX(0.9753);">Environment</span>
<div class="r" style="left:80px;top:121px;width:76px;height:22px;background:#f7f7f7;"></div>
<div class="r" style="left:80px;top:121px;width:1px;height:22px;background:#fff;"></div>
<div class="r" style="left:156px;top:121px;width:1px;height:22px;background:#a0a0a0;"></div>
<div class="r" style="left:157px;top:121px;width:1px;height:22px;background:#fff;"></div>
<svg class="r" style="left:85.5px;top:124px;overflow:visible;" width="15" height="15" viewBox="0 0 15 15"><path d="M0.5 2.5L3.5 0.5L9.5 1.5L10 7.5L6.5 10.5L1 9Z" fill="#fff" stroke="#000" stroke-width="0.9"/><path d="M0.5 2.5L6 4L6.5 10.5M6 4L9.5 1.5" stroke="#000" stroke-width="0.9" fill="none"/><path d="M6 4L9.5 1.5L10 7.5L6.5 10.5Z" fill="#20d020" stroke="#000" stroke-width="0.9"/><path d="M10.5 10L14 13.5M10.5 10V13M10.5 10H13.5" stroke="#000" stroke-width="1.2" fill="none"/></svg>
<span class="t" style="left:103.40px;top:126.00px;font:normal 13px/13px 'Liberation Sans', sans-serif;color:#000;transform:scaleX(0.9735);">Loads</span>
<svg class="r" style="left:144.3px;top:130px;" width="9" height="5" viewBox="0 0 9 5"><path d="M0 0H9L4.5 5Z" fill="#000"/></svg>
<svg class="r" style="left:162px;top:124px;overflow:visible;" width="15" height="15" viewBox="0 0 15 15"><path d="M0.5 2.5L3.5 0.5L9.5 1.5L10 7.5L6.5 10.5L1 9Z" fill="#fff" stroke="#000" stroke-width="0.9"/><path d="M0.5 2.5L6 4L6.5 10.5M6 4L9.5 1.5" stroke="#000" stroke-width="0.9" fill="none"/><path d="M6 4L9.5 1.5L10 7.5L6.5 10.5Z" fill="#20d020" stroke="#000" stroke-width="0.9"/><path d="M10.5 10L14 13.5M10.5 10V13M10.5 10H13.5" stroke="#000" stroke-width="1.2" fill="none"/></svg>
<span class="t" style="left:180.50px;top:126.00px;font:normal 13px/13px 'Liberation Sans', sans-serif;color:#000;transform:scaleX(0.9969);">Supports</span>
<svg class="r" style="left:238.8px;top:130px;" width="9" height="5" viewBox="0 0 9 5"><path d="M0 0H9L4.5 5Z" fill="#000"/></svg>
<svg class="r" style="left:256.5px;top:124px;overflow:visible;" width="15" height="15" viewBox="0 0 15 15"><path d="M0.5 2.5L3.5 0.5L9.5 1.5L10 7.5L6.5 10.5L1 9Z" fill="#fff" stroke="#000" stroke-width="0.9"/><path d="M0.5 2.5L6 4L6.5 10.5M6 4L9.5 1.5" stroke="#000" stroke-width="0.9" fill="none"/><path d="M6 4L9.5 1.5L10 7.5L6.5 10.5Z" fill="#20d020" stroke="#000" stroke-width="0.9"/><path d="M10.5 10L14 13.5M10.5 10V13M10.5 10H13.5" stroke="#000" stroke-width="1.2" fill="none"/></svg>
<span class="t" style="left:275.30px;top:126.00px;font:normal 13px/13px 'Liberation Sans', sans-serif;color:#000;transform:scaleX(0.9929);">Conditions</span>
<svg class="r" style="left:342.7px;top:130px;" width="9" height="5" viewBox="0 0 9 5"><path d="M0 0H9L4.5 5Z" fill="#000"/></svg>
<svg class="r" style="left:360.5px;top:123px;overflow:visible;" width="17" height="17" viewBox="0 0 17 17"><path d="M0.8 3.5L4.5 1L10.5 2.2L11 8L7 11L1.2 9.2Z" fill="#fff" stroke="#000" stroke-width="0.9"/><path d="M0.8 3.5L6.5 4.8L7 11M6.5 4.8L10.5 2.2" stroke="#000" stroke-width="0.8" fill="none"/><path d="M3.5 2L4 10M1 6.3L6.8 7.8" stroke="#3030e0" stroke-width="0.8" fill="none"/><path d="M7.5 7.5L8.5 9L10.3 4.5" stroke="#20a020" stroke-width="1.1" fill="none"/><path d="M8.5 17L12 13.5M11.5 17L15 13.5" stroke="#000" stroke-width="1.3"/></svg>
<span class="t" style="left:379.50px;top:126.00px;font:normal 13px/13px 'Liberation Sans', sans-serif;color:#000;transform:scaleX(0.9190);">Direct FE</span>
<svg class="r" style="left:435.6px;top:130px;" width="9" height="5" viewBox="0 0 9 5"><path d="M0 0H9L4.5 5Z" fill="#000"/></svg>
<div class="r" style="left:452px;top:123px;width:1px;height:18px;background:#a0a0a0;"></div>
<div class="r" style="left:453px;top:123px;width:1px;height:18px;background:#fff;"></div>
<svg class="r" style="left:463px;top:124px;overflow:visible;" width="15" height="16" viewBox="0 0 15 16"><rect x="0.5" y="0.5" width="9" height="15" fill="#e0e0e0" stroke="#a0a0a0"/><path d="M2.5 4H7.5M2.5 7H7.5M2.5 10H7.5M2.5 13H7.5" stroke="#a0a0a0"/><path d="M14 6.5C10 5 8 7 8 9.5S10 14 14 12.5" stroke="#a0a0a0" stroke-width="2" fill="none"/></svg>
<div class="r" style="left:487px;top:123px;width:1px;height:18px;background:#a0a0a0;"></div>
<div class="r" style="left:488px;top:123px;width:1px;height:18px;background:#fff;"></div>
<svg class="r" style="left:500px;top:124px;overflow:visible;" width="11" height="16" viewBox="0 0 11 16"><rect x="0" y="0" width="11" height="16" fill="#000"/><rect x="1.2" y="1.2" width="8.6" height="2.1" fill="#ff0000"/><rect x="1.2" y="4.0" width="8.6" height="2.1" fill="#ffff00"/><rect x="1.2" y="6.8" width="8.6" height="2.1" fill="#00e000"/><rect x="1.2" y="9.6" width="8.6" height="2.1" fill="#00ffff"/><rect x="1.2" y="12.4" width="8.6" height="2.1" fill="#0000ff"/></svg>
<span class="t" style="left:515.00px;top:126.00px;font:normal 13px/13px 'Liberation Sans', sans-serif;color:#000;transform:scaleX(1.0088);">Variable Data</span>
<svg class="r" style="left:599.8px;top:130px;" width="9" height="5" viewBox="0 0 9 5"><path d="M0 0H9L4.5 5Z" fill="#000"/></svg>
<div class="r" style="left:613px;top:121px;width:1px;height:22px;background:#a0a0a0;"></div>
<div class="r" style="left:614px;top:121px;width:1px;height:22px;background:#fff;"></div>
<div class="r" style="left:615px;top:121px;width:25px;height:22px;background:#fafafa;"></div>
<div class="r" style="left:641px;top:121px;width:25px;height:22px;background:#fafafa;"></div>
<div class="r" style="left:640px;top:121px;width:1px;height:22px;background:#b8b8b8;"></div>
<div class="r" style="left:666px;top:121px;width:1px;height:22px;background:#b8b8b8;"></div>
<svg class="r" style="left:619.5px;top:127px;overflow:visible;" width="16" height="10" viewBox="0 0 16 10"><path d="M0.5 0.5H12L15.5 5L12 9.5H0.5Z" fill="#fff" stroke="#000" stroke-width="0.9"/><text x="1.3" y="8" font-size="7.5" font-family="Liberation Mono" font-weight="bold" fill="#000" textLength="11.5" lengthAdjust="spacingAndGlyphs">MAX</text></svg>
<svg class="r" style="left:646px;top:127px;overflow:visible;" width="16" height="10" viewBox="0 0 16 10"><path d="M0.5 0.5H12L15.5 5L12 9.5H0.5Z" fill="#fff" stroke="#000" stroke-width="0.9"/><text x="1.3" y="8" font-size="7.5" font-family="Liberation Mono" font-weight="bold" fill="#000" textLength="11.5" lengthAdjust="spacingAndGlyphs">MIN</text></svg>
<svg class="r" style="left:673px;top:124px;overflow:visible;" width="16" height="15" viewBox="0 0 16 15"><path d="M0.5 14.5L15 0.5" stroke="#000" stroke-width="1.2"/></svg>
<svg class="r" style="left:691.5px;top:130px;" width="9" height="5" viewBox="0 0 9 5"><path d="M0 0H9L4.5 5Z" fill="#000"/></svg>
<div class="r" style="left:0px;top:144px;width:259px;height:22px;background:linear-gradient(90deg,#c3cfdf 0%,#cbd8e7 50%,#d6e2f0 100%);"></div>
<div class="r" style="left:0px;top:166px;width:257px;height:1px;background:#6a6a6a;"></div>
<div class="r" style="left:0px;top:167px;width:257px;height:1px;background:#9a9a9a;"></div>
<span class="t" style="left:-0.50px;top:149.00px;font:normal 13px/13px 'Liberation Sans', sans-serif;color:#000;transform:scaleX(0.9687);">Outline</span>
<svg class="r" style="left:247px;top:151px;" width="8" height="10" viewBox="0 0 8 10"><rect x="1.5" y="0.5" width="4" height="5" fill="none" stroke="#000" stroke-width="1"/><rect x="4" y="0" width="2" height="6" fill="#000"/><rect x="0" y="5.5" width="7.5" height="1" fill="#000"/><rect x="3.2" y="6.5" width="1" height="3.5" fill="#000"/></svg>
<div class="r" style="left:0px;top:168px;width:258px;height:24px;background:#f0f0f0;"></div>
<div class="r" style="left:0px;top:171px;width:1px;height:19px;background:#a0a0a0;"></div>
<div class="r" style="left:1px;top:171px;width:1px;height:19px;background:#fff;"></div>
<span class="t" style="left:6.20px;top:174.00px;font:normal 13px/13px 'Liberation Sans', sans-serif;color:#000;transform:scaleX(0.9600);">Filter:</span>
<div class="r" style="left:47px;top:173px;width:94px;height:18px;background:#fff;"></div>
<span class="t" style="left:49.80px;top:178.00px;font:normal 11px/11px 'Liberation Sans', sans-serif;color:#000;transform:scaleX(1.0281);">Name</span>
<div class="r" style="left:128px;top:174px;width:13px;height:17px;background:#f0f0f0;"></div>
<svg class="r" style="left:132px;top:181px;" width="7" height="4" viewBox="0 0 7 4"><path d="M0 0H7L3.5 4Z" fill="#000"/></svg>
<div class="r" style="left:150px;top:173px;width:108px;height:18px;background:#fff;"></div>
<div class="r" style="left:0px;top:192px;width:258px;height:1px;background:#a0a0a0;"></div>
<div class="r" style="left:0px;top:193px;width:258px;height:1px;background:#fff;"></div>
<div class="r" style="left:0px;top:196px;width:1px;height:19px;background:#a0a0a0;"></div>
<div class="r" style="left:1px;top:196px;width:1px;height:19px;background:#fff;"></div>
<div class="r" style="left:0px;top:217px;width:257px;height:294px;background:#fff;"></div>
<div class="r" style="left:257px;top:168px;width:6px;height:367px;background:#f0f0f0;"></div>
<div class="r" style="left:0px;top:511px;width:257px;height:16px;background:#f0f0f0;"></div>
<div class="r" style="left:14px;top:511px;width:214px;height:16px;background:#cdcdcd;"></div>
<svg class="r" style="left:2px;top:514px;" width="7" height="10" viewBox="0 0 7 10"><path d="M6 1L1.5 5L6 9" fill="none" stroke="#505050" stroke-width="1.6"/></svg>
<svg class="r" style="left:245px;top:514px;" width="7" height="10" viewBox="0 0 7 10"><path d="M1 1L5.5 5L1 9" fill="none" stroke="#505050" stroke-width="1.6"/></svg>
<div class="r" style="left:0px;top:527px;width:257px;height:1px;background:#fff;"></div>
<div class="r" style="left:132px;top:409px;width:125px;height:16px;background:#f0f0f0;"></div>
<span class="t" style="left:26.00px;top:220.00px;font:bold 11px/11px 'Liberation Sans', sans-serif;color:#000;transform:scaleX(1.0935);">Project</span>
<span class="t" style="left:53.50px;top:236.00px;font:bold 11px/11px 'Liberation Sans', sans-serif;color:#000;transform:scaleX(1.0702);">Model (C4)</span>
<span class="t" style="left:80.00px;top:252.00px;font:normal 11px/11px 'Liberation Sans', sans-serif;color:#000;transform:scaleX(0.9521);">Geometry</span>
<span class="t" style="left:106.20px;top:268.00px;font:normal 11px/11px 'Liberation Sans', sans-serif;color:#000;transform:scaleX(0.9906);">Part 1</span>
<span class="t" style="left:133.80px;top:284.00px;font:normal 11px/11px 'Liberation Sans', sans-serif;color:#000;transform:scaleX(0.9860);">volume.2</span>
<span class="t" style="left:133.80px;top:300.00px;font:normal 11px/11px 'Liberation Sans', sans-serif;color:#000;transform:scaleX(0.9770);">volume.1</span>
<span class="t" style="left:80.00px;top:316.00px;font:normal 11px/11px 'Liberation Sans', sans-serif;color:#000;transform:scaleX(0.9620);">Coordinate Systems</span>
<span class="t" style="left:80.00px;top:332.00px;font:normal 11px/11px 'Liberation Sans', sans-serif;color:#000;transform:scaleX(0.9489);">Connections</span>
<span class="t" style="left:80.00px;top:348.00px;font:normal 11px/11px 'Liberation Sans', sans-serif;color:#000;transform:scaleX(0.8856);">Mesh</span>
<span class="t" style="left:80.00px;top:364.00px;font:bold 11px/11px 'Liberation Sans', sans-serif;color:#000;transform:scaleX(1.0929);">Static Structural (C5)</span>
<span class="t" style="left:106.90px;top:380.00px;font:normal 11px/11px 'Liberation Sans', sans-serif;color:#000;transform:scaleX(0.9612);">Analysis Settings</span>
<span class="t" style="left:106.90px;top:396.00px;font:normal 11px/11px 'Liberation Sans', sans-serif;color:#000;transform:scaleX(0.9847);">Imported Load (A3)</span>
<span class="t" style="left:106.90px;top:428.00px;font:normal 11px/11px 'Liberation Sans', sans-serif;color:#000;transform:scaleX(0.9693);">Fixed Support</span>
<span class="t" style="left:107.50px;top:444.00px;font:bold 11px/11px 'Liberation Sans', sans-serif;color:#000;transform:scaleX(1.0521);">Solution (C6)</span>
<span class="t" style="left:133.80px;top:460.00px;font:normal 11px/11px 'Liberation Sans', sans-serif;color:#000;transform:scaleX(0.9866);">Solution Information</span>
<span class="t" style="left:133.80px;top:476.00px;font:normal 11px/11px 'Liberation Sans', sans-serif;color:#000;transform:scaleX(0.9885);">Total Deformation</span>
<div class="r" style="left:132px;top:409px;width:125px;height:16px;overflow:hidden">
<span class="t" style="left:1.80px;top:3px;font:11px/11px 'Liberation Sans', sans-serif;transform:scaleX(0.9968)">Imported Body Temperature</span></div>
<div class="r" style="left:9px;top:232px;width:1px;height:5px;background:repeating-linear-gradient(180deg,#808080 0 1px,transparent 1px 2px);"></div>
<div class="r" style="left:36px;top:249px;width:1px;height:120px;background:repeating-linear-gradient(180deg,#808080 0 1px,transparent 1px 2px);"></div>
<div class="r" style="left:63px;top:265px;width:1px;height:4px;background:repeating-linear-gradient(180deg,#808080 0 1px,transparent 1px 2px);"></div>
<div class="r" style="left:90px;top:281px;width:1px;height:25px;background:repeating-linear-gradient(180deg,#808080 0 1px,transparent 1px 2px);"></div>
<div class="r" style="left:63px;top:377px;width:1px;height:73px;background:repeating-linear-gradient(180deg,#808080 0 1px,transparent 1px 2px);"></div>
<div class="r" style="left:90px;top:409px;width:1px;height:4px;background:repeating-linear-gradient(180deg,#808080 0 1px,transparent 1px 2px);"></div>
<div class="r" style="left:90px;top:457px;width:1px;height:25px;background:repeating-linear-gradient(180deg,#808080 0 1px,transparent 1px 2px);"></div>
<div class="r" style="left:14px;top:241px;width:10px;height:1px;background:repeating-linear-gradient(90deg,#808080 0 1px,transparent 1px 2px);"></div>
<div class="r" style="left:41px;top:257px;width:10px;height:1px;background:repeating-linear-gradient(90deg,#808080 0 1px,transparent 1px 2px);"></div>
<div class="r" style="left:41px;top:321px;width:10px;height:1px;background:repeating-linear-gradient(90deg,#808080 0 1px,transparent 1px 2px);"></div>
<div class="r" style="left:41px;top:369px;width:10px;height:1px;background:repeating-linear-gradient(90deg,#808080 0 1px,transparent 1px 2px);"></div>
<div class="r" style="left:37px;top:337px;width:14px;height:1px;background:repeating-linear-gradient(90deg,#808080 0 1px,transparent 1px 2px);"></div>
<div class="r" style="left:37px;top:353px;width:14px;height:1px;background:repeating-linear-gradient(90deg,#808080 0 1px,transparent 1px 2px);"></div>
<div class="r" style="left:68px;top:273px;width:10px;height:1px;background:repeating-linear-gradient(90deg,#808080 0 1px,transparent 1px 2px);"></div>
<div class="r" style="left:91px;top:289px;width:14px;height:1px;background:repeating-linear-gradient(90deg,#808080 0 1px,transparent 1px 2px);"></div>
<div class="r" style="left:91px;top:305px;width:14px;height:1px;background:repeating-linear-gradient(90deg,#808080 0 1px,transparent 1px 2px);"></div>
<div class="r" style="left:64px;top:385px;width:14px;height:1px;background:repeating-linear-gradient(90deg,#808080 0 1px,transparent 1px 2px);"></div>
<div class="r" style="left:68px;top:401px;width:10px;height:1px;background:repeating-linear-gradient(90deg,#808080 0 1px,transparent 1px 2px);"></div>
<div class="r" style="left:95px;top:417px;width:10px;height:1px;background:repeating-linear-gradient(90deg,#808080 0 1px,transparent 1px 2px);"></div>
<div class="r" style="left:64px;top:433px;width:14px;height:1px;background:repeating-linear-gradient(90deg,#808080 0 1px,transparent 1px 2px);"></div>
<div class="r" style="left:68px;top:449px;width:10px;height:1px;background:repeating-linear-gradient(90deg,#808080 0 1px,transparent 1px 2px);"></div>
<div class="r" style="left:91px;top:465px;width:14px;height:1px;background:repeating-linear-gradient(90deg,#808080 0 1px,transparent 1px 2px);"></div>
<div class="r" style="left:91px;top:481px;width:14px;height:1px;background:repeating-linear-gradient(90deg,#808080 0 1px,transparent 1px 2px);"></div>
<svg class="r" style="left:5.0px;top:236.5px;" width="9" height="9" viewBox="0 0 9 9"><rect x="0.5" y="0.5" width="8" height="8" fill="#fff" stroke="#808080"/><rect x="2" y="4" width="5" height="1" fill="#000"/></svg>
<svg class="r" style="left:32.0px;top:252.5px;" width="9" height="9" viewBox="0 0 9 9"><rect x="0.5" y="0.5" width="8" height="8" fill="#fff" stroke="#808080"/><rect x="2" y="4" width="5" height="1" fill="#000"/></svg>
<svg class="r" style="left:59.0px;top:268.5px;" width="9" height="9" viewBox="0 0 9 9"><rect x="0.5" y="0.5" width="8" height="8" fill="#fff" stroke="#808080"/><rect x="2" y="4" width="5" height="1" fill="#000"/></svg>
<svg class="r" style="left:32.0px;top:316.5px;" width="9" height="9" viewBox="0 0 9 9"><rect x="0.5" y="0.5" width="8" height="8" fill="#fff" stroke="#808080"/><rect x="2" y="4" width="5" height="1" fill="#000"/><rect x="4" y="2" width="1" height="5" fill="#000"/></svg>
<svg class="r" style="left:32.0px;top:364.5px;" width="9" height="9" viewBox="0 0 9 9"><rect x="0.5" y="0.5" width="8" height="8" fill="#fff" stroke="#808080"/><rect x="2" y="4" width="5" height="1" fill="#000"/></svg>
<svg class="r" style="left:59.0px;top:396.5px;" width="9" height="9" viewBox="0 0 9 9"><rect x="0.5" y="0.5" width="8" height="8" fill="#fff" stroke="#808080"/><rect x="2" y="4" width="5" height="1" fill="#000"/></svg>
<svg class="r" style="left:86.0px;top:412.5px;" width="9" height="9" viewBox="0 0 9 9"><rect x="0.5" y="0.5" width="8" height="8" fill="#fff" stroke="#808080"/><rect x="2" y="4" width="5" height="1" fill="#000"/><rect x="4" y="2" width="1" height="5" fill="#000"/></svg>
<svg class="r" style="left:59.0px;top:444.5px;" width="9" height="9" viewBox="0 0 9 9"><rect x="0.5" y="0.5" width="8" height="8" fill="#fff" stroke="#808080"/><rect x="2" y="4" width="5" height="1" fill="#000"/></svg>
<svg class="r" style="left:51px;top:256px;overflow:visible;" width="9" height="9" viewBox="0 0 9 9"><path d="M0.8 4.8L3 7.5L8.2 0.8" stroke="#109010" stroke-width="1.9" fill="none"/></svg>
<svg class="r" style="left:51px;top:320px;overflow:visible;" width="9" height="9" viewBox="0 0 9 9"><path d="M0.8 4.8L3 7.5L8.2 0.8" stroke="#109010" stroke-width="1.9" fill="none"/></svg>
<svg class="r" style="left:51px;top:336px;overflow:visible;" width="9" height="9" viewBox="0 0 9 9"><path d="M0.8 4.8L3 7.5L8.2 0.8" stroke="#109010" stroke-width="1.9" fill="none"/></svg>
<svg class="r" style="left:51px;top:352px;overflow:visible;" width="9" height="9" viewBox="0 0 9 9"><path d="M0.8 4.8L3 7.5L8.2 0.8" stroke="#109010" stroke-width="1.9" fill="none"/></svg>
<svg class="r" style="left:51px;top:368px;overflow:visible;" width="9" height="9" viewBox="0 0 9 9"><path d="M0.8 4.8L3 7.5L8.2 0.8" stroke="#109010" stroke-width="1.9" fill="none"/></svg>
<svg class="r" style="left:78px;top:384px;overflow:visible;" width="9" height="9" viewBox="0 0 9 9"><path d="M0.8 4.8L3 7.5L8.2 0.8" stroke="#109010" stroke-width="1.9" fill="none"/></svg>
<svg class="r" style="left:78px;top:400px;overflow:visible;" width="9" height="9" viewBox="0 0 9 9"><path d="M0.8 4.8L3 7.5L8.2 0.8" stroke="#109010" stroke-width="1.9" fill="none"/></svg>
<svg class="r" style="left:78px;top:432px;overflow:visible;" width="9" height="9" viewBox="0 0 9 9"><path d="M0.8 4.8L3 7.5L8.2 0.8" stroke="#109010" stroke-width="1.9" fill="none"/></svg>
<svg class="r" style="left:78px;top:448px;overflow:visible;" width="9" height="9" viewBox="0 0 9 9"><path d="M0.8 4.8L3 7.5L8.2 0.8" stroke="#109010" stroke-width="1.9" fill="none"/></svg>
<svg class="r" style="left:105px;top:416px;overflow:visible;" width="9" height="9" viewBox="0 0 9 9"><path d="M0.8 4.8L3 7.5L8.2 0.8" stroke="#109010" stroke-width="1.9" fill="none"/></svg>
<svg class="r" style="left:105px;top:464px;overflow:visible;" width="9" height="9" viewBox="0 0 9 9"><path d="M0.8 4.8L3 7.5L8.2 0.8" stroke="#109010" stroke-width="1.9" fill="none"/></svg>
<svg class="r" style="left:105px;top:480px;overflow:visible;" width="9" height="9" viewBox="0 0 9 9"><path d="M0.8 4.8L3 7.5L8.2 0.8" stroke="#109010" stroke-width="1.9" fill="none"/></svg>
<svg class="r" style="left:78px;top:273px;overflow:visible;" width="8" height="8" viewBox="0 0 8 8"><path d="M1 1.5L6.5 7M6.8 0.8L1 7" stroke="#109010" stroke-width="1.7" fill="none"/></svg>
<svg class="r" style="left:105.5px;top:289px;overflow:visible;" width="8" height="8" viewBox="0 0 8 8"><path d="M1 1.5L6.5 7M6.8 0.8L1 7" stroke="#101090" stroke-width="1.7" fill="none"/></svg>
<svg class="r" style="left:105.5px;top:305px;overflow:visible;" width="8" height="8" viewBox="0 0 8 8"><path d="M1 1.5L6.5 7M6.8 0.8L1 7" stroke="#109010" stroke-width="1.7" fill="none"/></svg>
<svg class="r" style="left:5px;top:217px;overflow:visible;" width="16" height="16" viewBox="0 0 16 16"><path d="M0.5 3.2L2 1H7L8.5 3.2H14.5V14.5H0.5Z" fill="#f6ee94" stroke="#8a7a10" stroke-width="1"/><path d="M14.5 3.5V14.5H0.8" fill="none" stroke="#3c3400" stroke-width="1"/><rect x="3.5" y="5.5" width="8" height="7" fill="#20a090" stroke="#000" stroke-width="0.9"/><rect x="5" y="7" width="5" height="1.5" fill="#c0fff0"/></svg>
<svg class="r" style="left:32px;top:233px;overflow:visible;" width="16" height="16" viewBox="0 0 16 16"><path d="M0.5 3.2L2 1H7L8.5 3.2H14.5V14.5H0.5Z" fill="#f6ee94" stroke="#8a7a10" stroke-width="1"/><path d="M14.5 3.5V14.5H0.8" fill="none" stroke="#3c3400" stroke-width="1"/><path d="M2.5 7.5l5 -2.5l5 2.5v4.5l-5 2.5l-5 -2.5z" fill="#3c8cf0" stroke="#000" stroke-width="0.9"/><path d="M2.5 7.5l5 2.5l5 -2.5M7.5 10.0v4.5" stroke="#000" stroke-width="0.9" fill="none"/><path d="M3.1 7.8l4.4 -2.2l4.4 2.2l-4.4 2.2z" fill="#a0d0ff" opacity="0.8"/></svg>
<svg class="r" style="left:59px;top:249px;overflow:visible;" width="15" height="16" viewBox="0 0 15 16"><path d="M0.8 4.2l5 -2.5l5 2.5v6l-5 2.5l-5 -2.5z" fill="#3c8cf0" stroke="#000" stroke-width="0.9"/><path d="M0.8 4.2l5 2.5l5 -2.5M5.8 6.7v6" stroke="#000" stroke-width="0.9" fill="none"/><path d="M1.4 4.5l4.4 -2.2l4.4 2.2l-4.4 2.2z" fill="#a0d0ff" opacity="0.8"/><path d="M5.2 5.2l5 -2.5l5 2.5v6l-5 2.5l-5 -2.5z" fill="#3c8cf0" stroke="#000" stroke-width="0.9"/><path d="M5.2 5.2l5 2.5l5 -2.5M10.2 7.7v6" stroke="#000" stroke-width="0.9" fill="none"/><path d="M5.8 5.5l4.4 -2.2l4.4 2.2l-4.4 2.2z" fill="#a0d0ff" opacity="0.8"/></svg>
<svg class="r" style="left:86px;top:265px;overflow:visible;" width="15" height="16" viewBox="0 0 15 16"><path d="M0.8 4.2l5 -2.5l5 2.5v6l-5 2.5l-5 -2.5z" fill="#3c8cf0" stroke="#000" stroke-width="0.9"/><path d="M0.8 4.2l5 2.5l5 -2.5M5.8 6.7v6" stroke="#000" stroke-width="0.9" fill="none"/><path d="M1.4 4.5l4.4 -2.2l4.4 2.2l-4.4 2.2z" fill="#a0d0ff" opacity="0.8"/><path d="M5.2 5.2l5 -2.5l5 2.5v6l-5 2.5l-5 -2.5z" fill="#3c8cf0" stroke="#000" stroke-width="0.9"/><path d="M5.2 5.2l5 2.5l5 -2.5M10.2 7.7v6" stroke="#000" stroke-width="0.9" fill="none"/><path d="M5.8 5.5l4.4 -2.2l4.4 2.2l-4.4 2.2z" fill="#a0d0ff" opacity="0.8"/></svg>
<svg class="r" style="left:116px;top:281px;overflow:visible;" width="12" height="16" viewBox="0 0 12 16"><path d="M0.8 4.5l5 -2.5l5 2.5v6l-5 2.5l-5 -2.5z" fill="#3c8cf0" stroke="#000" stroke-width="0.9"/><path d="M0.8 4.5l5 2.5l5 -2.5M5.8 7.0v6" stroke="#000" stroke-width="0.9" fill="none"/><path d="M1.4 4.8l4.4 -2.2l4.4 2.2l-4.4 2.2z" fill="#a0d0ff" opacity="0.8"/></svg>
<svg class="r" style="left:116px;top:297px;overflow:visible;" width="12" height="16" viewBox="0 0 12 16"><path d="M0.8 4.5l5 -2.5l5 2.5v6l-5 2.5l-5 -2.5z" fill="#3c8cf0" stroke="#000" stroke-width="0.9"/><path d="M0.8 4.5l5 2.5l5 -2.5M5.8 7.0v6" stroke="#000" stroke-width="0.9" fill="none"/><path d="M1.4 4.8l4.4 -2.2l4.4 2.2l-4.4 2.2z" fill="#a0d0ff" opacity="0.8"/></svg>
<svg class="r" style="left:59px;top:313px;overflow:visible;" width="16" height="16" viewBox="0 0 16 16"><path d="M8 9V0.5" stroke="#20b020" stroke-width="1.5"/><path d="M8 0L6 3.5H10Z" fill="#20b020"/><path d="M8 9L1 13.5" stroke="#2030e0" stroke-width="1.6"/><path d="M8 9L15 13.5" stroke="#e02020" stroke-width="1.6"/><path d="M8 9V15M8 9L14 5M8 9L2 5" stroke="#a0a0a0" stroke-width="0.8"/></svg>
<svg class="r" style="left:59px;top:329px;overflow:visible;" width="16" height="16" viewBox="0 0 16 16"><path d="M1 4L6 1.5L14 3.5V11.5L9 14.5L1 12Z" fill="#fff" stroke="#000" stroke-width="0.9"/><path d="M1 4L9 6.5V14.5M9 6.5L14 3.5M5 5.2V13.2M5 2V5" stroke="#000" stroke-width="0.8" fill="none"/><path d="M5 5.2L9 6.5V14.5L5 13.2Z" fill="#d030d0" stroke="#000" stroke-width="0.8"/></svg>
<svg class="r" style="left:59px;top:345px;overflow:visible;" width="16" height="16" viewBox="0 0 16 16"><path d="M1 4L6 1.5L14 3.5V11.5L9 14.5L1 12Z" fill="#fff" stroke="#000" stroke-width="0.9"/><path d="M1 4L9 6.5V14.5M9 6.5L14 3.5" stroke="#000" stroke-width="0.8" fill="none"/><path d="M1 8L9 10.5L14 7.5M5 5.2V13.2M11.5 5V13M3.5 2.8L11.5 5M6 1.5V3.5M10 2.5L5 5.2" stroke="#3030c0" stroke-width="0.8" fill="none"/><circle cx="5" cy="9.5" r="2.2" fill="none" stroke="#3030c0" stroke-width="0.8"/></svg>
<svg class="r" style="left:59px;top:361px;overflow:visible;" width="16" height="16" viewBox="0 0 16 16"><path d="M0.5 3.2L2 1H7L8.5 3.2H14.5V14.5H0.5Z" fill="#90e090" stroke="#208020" stroke-width="1"/><path d="M14.5 3.5V14.5H0.8" fill="none" stroke="#3c3400" stroke-width="1"/><rect x="3" y="8.2" width="9" height="1" fill="#102040"/></svg>
<svg class="r" style="left:87px;top:377px;overflow:visible;" width="15" height="16" viewBox="0 0 15 16"><rect x="1.5" y="2.5" width="12" height="10" fill="#f0f0f0" stroke="#a0a0a0" stroke-width="0.8"/><path d="M5.5 2.5V12.5M9.5 2.5V12.5" stroke="#a0a0a0" stroke-width="0.7"/><path d="M1.5 12C4 10 4.5 3.5 7.5 3.5S11 10 13.5 12" stroke="#106050" stroke-width="1.4" fill="none"/><path d="M0.5 0.5H3.5L2 2.5ZM6 0.5H9L7.5 2.5ZM11.5 0.5H14.5L13 2.5Z" fill="#2030e0"/><path d="M0.5 15H3.5L2 13ZM6 15H9L7.5 13ZM11.5 15H14.5L13 13Z" fill="#e02020"/></svg>
<svg class="r" style="left:86px;top:393px;overflow:visible;" width="16" height="16" viewBox="0 0 16 16"><path d="M0.5 3.2L2 1H7L8.5 3.2H14.5V14.5H0.5Z" fill="#f6ee94" stroke="#8a7a10" stroke-width="1"/><path d="M14.5 3.5V14.5H0.8" fill="none" stroke="#3c3400" stroke-width="1"/><path d="M3 9.5H12M8.5 6L12 9.5L8.5 13" stroke="#1020f0" stroke-width="1.3" fill="none"/></svg>
<svg class="r" style="left:113px;top:409px;overflow:visible;" width="16" height="16" viewBox="0 0 16 16"><path d="M0 4H9M6.5 1.5L9.2 4L6.5 6.5M0 10.5H9M6.5 8L9.2 10.5L6.5 13" stroke="#b02020" stroke-width="1.1" fill="none"/><rect x="11.6" y="2.5" width="2.4" height="9" rx="1.2" fill="#fff" stroke="#000" stroke-width="0.9"/><rect x="12.3" y="6" width="1" height="6" fill="#e00020"/><circle cx="12.8" cy="12.8" r="1.9" fill="#e00020" stroke="#000" stroke-width="0.7"/></svg>
<svg class="r" style="left:86px;top:425px;overflow:visible;" width="16" height="16" viewBox="0 0 16 16"><path d="M1 3.5L5.5 1L10.5 2.5V9L6 12L1 10Z" fill="#fff" stroke="#000" stroke-width="0.9"/><path d="M1 3.5L6 5.5V12M6 5.5L10.5 2.5" stroke="#000" stroke-width="0.9" fill="none"/><path d="M6 5.5L10.5 2.5V9L6 12Z" fill="#20d0e0" stroke="#000" stroke-width="0.9"/><path d="M8 16L12 12M11.5 16L15.5 12" stroke="#000" stroke-width="1.4"/></svg>
<svg class="r" style="left:86px;top:441px;overflow:visible;" width="16" height="16" viewBox="0 0 16 16"><path d="M0.5 3.2L2 1H7L8.5 3.2H14.5V14.5H0.5Z" fill="#f6ee94" stroke="#8a7a10" stroke-width="1"/><path d="M14.5 3.5V14.5H0.8" fill="none" stroke="#3c3400" stroke-width="1"/><g transform="translate(2.5 5) scale(0.95)"><path d="M0 2.5L5 0L10 2.5L5 5Z" fill="#e03020" stroke="#000" stroke-width="0.8"/><path d="M0 2.5L5 5V11L0 8.5Z" fill="#2060e0" stroke="#000" stroke-width="0.8"/><path d="M5 5L10 2.5V8.5L5 11Z" fill="#f0d020" stroke="#000" stroke-width="0.8"/><path d="M1.5 4.5L5 6.2V10L1.5 8.3Z" fill="#20c0c0"/><path d="M5 6.2L8.5 4.5V8.3L5 10Z" fill="#30c030"/></g></svg>
<svg class="r" style="left:113px;top:457px;overflow:visible;" width="16" height="16" viewBox="0 0 16 16"><path d="M0.5 3.2L2 1H7L8.5 3.2H14.5V14.5H0.5Z" fill="#f6ee94" stroke="#8a7a10" stroke-width="1"/><path d="M14.5 3.5V14.5H0.8" fill="none" stroke="#3c3400" stroke-width="1"/><rect x="6.3" y="4.5" width="2.4" height="6" fill="#1020f0"/><rect x="6.3" y="11.8" width="2.4" height="2.2" fill="#1020f0"/></svg>
<svg class="r" style="left:113px;top:473px;overflow:visible;" width="16" height="16" viewBox="0 0 16 16"><g transform="translate(0.5 2) scale(1.0)"><path d="M0 2.5L5 0L10 2.5L5 5Z" fill="#e03020" stroke="#000" stroke-width="0.8"/><path d="M0 2.5L5 5V11L0 8.5Z" fill="#2060e0" stroke="#000" stroke-width="0.8"/><path d="M5 5L10 2.5V8.5L5 11Z" fill="#f0d020" stroke="#000" stroke-width="0.8"/><path d="M1.5 4.5L5 6.2V10L1.5 8.3Z" fill="#20c0c0"/><path d="M5 6.2L8.5 4.5V8.3L5 10Z" fill="#30c030"/></g><g transform="translate(5.5 3.5) scale(1.0)"><path d="M0 2.5L5 0L10 2.5L5 5Z" fill="#e03020" stroke="#000" stroke-width="0.8"/><path d="M0 2.5L5 5V11L0 8.5Z" fill="#2060e0" stroke="#000" stroke-width="0.8"/><path d="M5 5L10 2.5V8.5L5 11Z" fill="#f0d020" stroke="#000" stroke-width="0.8"/><path d="M1.5 4.5L5 6.2V10L1.5 8.3Z" fill="#20c0c0"/><path d="M5 6.2L8.5 4.5V8.3L5 10Z" fill="#30c030"/></g></svg>
<svg class="r" style="left:11.5px;top:198px;overflow:visible;" width="13" height="15" viewBox="0 0 13 15"><path d="M0.5 0.5H8.5L12.5 4.5V14.5H0.5Z" fill="#fff" stroke="#000" stroke-width="1"/><path d="M3.5 6A3.2 3.2 0 0 1 9.5 5.5" stroke="#10a010" stroke-width="1.6" fill="none"/><path d="M10.5 3L10 7L7 5.5Z" fill="#10a010"/><path d="M9.5 9A3.2 3.2 0 0 1 3.5 9.5" stroke="#10a010" stroke-width="1.6" fill="none"/><path d="M2.5 12L3 8L6 9.5Z" fill="#10a010"/></svg>
<svg class="r" style="left:34px;top:198px;overflow:visible;" width="16" height="15" viewBox="0 0 16 15"><path d="M5 0.5H11L15.5 5V14.5H5Z" fill="#f4f4f4" stroke="#909090"/><path d="M0.5 10L8 2.5L12 6L5 13.5H2.5Z" fill="#d0d8ff" stroke="#7080c0" stroke-width="0.9"/><path d="M0.5 10L3.5 7L7.5 10.5L5 13.5H2.5Z" fill="#fff" stroke="#7080c0" stroke-width="0.9"/></svg>
<svg class="r" style="left:58.5px;top:199px;overflow:visible;" width="16" height="13" viewBox="0 0 16 13"><path d="M0 6.5H4M4 0.5V12.5M4 1L10 6.5L4 12M12.5 6.5H16" stroke="#000" stroke-width="1.1" fill="none"/><circle cx="11.2" cy="6.5" r="1.6" fill="#fff" stroke="#000" stroke-width="1"/></svg>
<svg class="r" style="left:84px;top:199px;overflow:visible;" width="11" height="11" viewBox="0 0 11 11"><rect x="0.5" y="0.5" width="10" height="10" fill="#fff" stroke="#606060"/><path d="M2.5 5.5H8.5M5.5 2.5V8.5" stroke="#000" stroke-width="1.2"/></svg>
<svg class="r" style="left:106px;top:197px;overflow:visible;" width="15" height="16" viewBox="0 0 15 16"><path d="M0.5 3.2L2 1H7L8.5 3.2H14.5V14.5H0.5Z" fill="#e8d060" stroke="#807000" stroke-width="1"/><path d="M14.5 3.5V14.5H0.8" fill="none" stroke="#3c3400" stroke-width="1"/><circle cx="5.5" cy="10.5" r="3" fill="#e01010"/><rect x="3.5" y="9.9" width="4" height="1.3" fill="#fff"/></svg>
<svg class="r" style="left:133px;top:197px;overflow:visible;" width="12" height="16" viewBox="0 0 12 16"><text x="0" y="7.5" font-size="8.5" font-family="Liberation Sans" font-weight="bold" fill="#2020e0">A</text><text x="0" y="15.5" font-size="8.5" font-family="Liberation Sans" font-weight="bold" fill="#c00020">Z</text><path d="M9.5 0.5V13" stroke="#000" stroke-width="1.4"/><path d="M9.5 15.5L7 11.5H12Z" fill="#000"/></svg>
<div class="r" style="left:0px;top:533px;width:259px;height:23px;background:linear-gradient(90deg,#c3cfdf 0%,#cbd8e7 50%,#d6e2f0 100%);"></div>
<div class="r" style="left:0px;top:556px;width:257px;height:1px;background:#6a6a6a;"></div>
<span class="t" style="left:-0.50px;top:539.00px;font:normal 12.5px/12.5px 'Liberation Sans', sans-serif;color:#000;transform:scaleX(1.0740);">Details of &quot;Imported Body Temperature&quot;</span>
<svg class="r" style="left:246.5px;top:541px;" width="8" height="10" viewBox="0 0 8 10"><rect x="1.5" y="0.5" width="4" height="5" fill="none" stroke="#000" stroke-width="1"/><rect x="4" y="0" width="2" height="6" fill="#000"/><rect x="0" y="5.5" width="7.5" height="1" fill="#000"/><rect x="3.2" y="6.5" width="1" height="3.5" fill="#000"/></svg>
<div class="r" style="left:0px;top:557px;width:240px;height:215px;background:#fff;"></div>
<div class="r" style="left:0px;top:557px;width:230px;height:1px;background:#a0a0a0;"></div>
<div class="r" style="left:10px;top:575px;width:230px;height:1px;background:#a0a0a0;"></div>
<div class="r" style="left:10px;top:593px;width:230px;height:1px;background:#a0a0a0;"></div>
<div class="r" style="left:10px;top:611px;width:230px;height:1px;background:#a0a0a0;"></div>
<div class="r" style="left:10px;top:629px;width:230px;height:1px;background:#a0a0a0;"></div>
<div class="r" style="left:10px;top:647px;width:230px;height:1px;background:#a0a0a0;"></div>
<div class="r" style="left:10px;top:665px;width:230px;height:1px;background:#a0a0a0;"></div>
<div class="r" style="left:10px;top:683px;width:230px;height:1px;background:#a0a0a0;"></div>
<div class="r" style="left:10px;top:701px;width:230px;height:1px;background:#a0a0a0;"></div>
<div class="r" style="left:10px;top:719px;width:230px;height:1px;background:#a0a0a0;"></div>
<div class="r" style="left:10px;top:737px;width:230px;height:1px;background:#a0a0a0;"></div>
<div class="r" style="left:10px;top:755px;width:230px;height:1px;background:#a0a0a0;"></div>
<div class="r" style="left:10px;top:773px;width:230px;height:1px;background:#a0a0a0;"></div>
<div class="r" style="left:10px;top:557px;width:1px;height:215px;background:#a0a0a0;"></div>
<div class="r" style="left:239px;top:557px;width:1px;height:215px;background:#a0a0a0;"></div>
<svg class="r" style="left:-2px;top:562px;" width="10" height="10" viewBox="0 0 10 10"><rect x="0.5" y="0.5" width="8" height="8" fill="#fff" stroke="#808080"/><rect x="2.5" y="4" width="4.5" height="1" fill="#000"/></svg>
<span class="t" style="left:14.00px;top:561.00px;font:bold 11.5px/11.5px 'Liberation Sans', sans-serif;color:#000;transform:scaleX(0.9362);">Scope</span>
<div class="r" style="left:131px;top:575px;width:1px;height:18px;background:#a0a0a0;"></div>
<span class="t" style="left:14.00px;top:579.00px;font:normal 11.5px/11.5px 'Liberation Sans', sans-serif;color:#000;transform:scaleX(1.0502);">Scoping Method</span>
<span class="t" style="left:135.30px;top:579.00px;font:normal 11.5px/11.5px 'Liberation Sans', sans-serif;color:#000;transform:scaleX(1.0010);">Geometry Selection</span>
<div class="r" style="left:131px;top:593px;width:1px;height:18px;background:#a0a0a0;"></div>
<span class="t" style="left:14.00px;top:597.00px;font:normal 11.5px/11.5px 'Liberation Sans', sans-serif;color:#000;transform:scaleX(0.9941);">Geometry</span>
<span class="t" style="left:135.30px;top:597.00px;font:normal 11.5px/11.5px 'Liberation Sans', sans-serif;color:#000;transform:scaleX(0.9885);">1 Body</span>
<svg class="r" style="left:-2px;top:616px;" width="10" height="10" viewBox="0 0 10 10"><rect x="0.5" y="0.5" width="8" height="8" fill="#fff" stroke="#808080"/><rect x="2.5" y="4" width="4.5" height="1" fill="#000"/></svg>
<span class="t" style="left:14.00px;top:615.00px;font:bold 11.5px/11.5px 'Liberation Sans', sans-serif;color:#000;transform:scaleX(1.0170);">Definition</span>
<div class="r" style="left:131px;top:629px;width:1px;height:18px;background:#a0a0a0;"></div>
<div class="r" style="left:132px;top:630px;width:107px;height:17px;background:#e8e6e3;"></div>
<span class="t" style="left:14.00px;top:633.00px;font:normal 11.5px/11.5px 'Liberation Sans', sans-serif;color:#000;transform:scaleX(0.9945);">Type</span>
<span class="t" style="left:135.30px;top:633.00px;font:normal 11.5px/11.5px 'Liberation Sans', sans-serif;color:#000;transform:scaleX(1.0161);">Imported Body Te...</span>
<div class="r" style="left:131px;top:647px;width:1px;height:18px;background:#a0a0a0;"></div>
<span class="t" style="left:14.00px;top:651.00px;font:normal 11.5px/11.5px 'Liberation Sans', sans-serif;color:#000;transform:scaleX(1.0328);">Tabular Loading</span>
<span class="t" style="left:135.30px;top:651.00px;font:normal 11.5px/11.5px 'Liberation Sans', sans-serif;color:#000;transform:scaleX(1.0202);">Program Controlled</span>
<div class="r" style="left:131px;top:665px;width:1px;height:18px;background:#a0a0a0;"></div>
<span class="t" style="left:14.00px;top:669.00px;font:normal 11.5px/11.5px 'Liberation Sans', sans-serif;color:#000;transform:scaleX(0.9564);">Suppressed</span>
<span class="t" style="left:135.30px;top:669.00px;font:normal 11.5px/11.5px 'Liberation Sans', sans-serif;color:#000;transform:scaleX(1.0349);">No</span>
<svg class="r" style="left:-2px;top:688px;" width="10" height="10" viewBox="0 0 10 10"><rect x="0.5" y="0.5" width="8" height="8" fill="#fff" stroke="#808080"/><rect x="2.5" y="4" width="4.5" height="1" fill="#000"/></svg>
<span class="t" style="left:14.00px;top:687.00px;font:bold 11.5px/11.5px 'Liberation Sans', sans-serif;color:#000;transform:scaleX(0.9978);">Transfer Definition</span>
<div class="r" style="left:131px;top:701px;width:1px;height:18px;background:#a0a0a0;"></div>
<span class="t" style="left:14.00px;top:705.00px;font:normal 11.5px/11.5px 'Liberation Sans', sans-serif;color:#000;transform:scaleX(0.9588);">CFD Domain</span>
<span class="t" style="left:135.30px;top:705.00px;font:normal 11.5px/11.5px 'Liberation Sans', sans-serif;color:#000;transform:scaleX(1.0116);">solid</span>
<svg class="r" style="left:-2px;top:724px;" width="10" height="10" viewBox="0 0 10 10"><rect x="0.5" y="0.5" width="8" height="8" fill="#fff" stroke="#808080"/><rect x="2.5" y="4" width="4.5" height="1" fill="#000"/></svg>
<span class="t" style="left:14.00px;top:723.00px;font:bold 11.5px/11.5px 'Liberation Sans', sans-serif;color:#000;transform:scaleX(0.9696);">CFD Data</span>
<div class="r" style="left:131px;top:737px;width:1px;height:18px;background:#a0a0a0;"></div>
<div class="r" style="left:132px;top:738px;width:107px;height:17px;background:#e8e6e3;"></div>
<span class="t" style="left:14.00px;top:741.00px;font:normal 11.5px/11.5px 'Liberation Sans', sans-serif;color:#000;transform:scaleX(0.9393);">CFD Results File</span>
<span class="t" style="left:135.30px;top:741.00px;font:normal 11.5px/11.5px 'Liberation Sans', sans-serif;color:#000;transform:scaleX(0.9760);">E:\Ansys_case\roc...</span>
<svg class="r" style="left:-2px;top:760px;" width="10" height="10" viewBox="0 0 10 10"><rect x="0.5" y="0.5" width="8" height="8" fill="#fff" stroke="#808080"/><rect x="2.5" y="4" width="4.5" height="1" fill="#000"/></svg>
<span class="t" style="left:14.00px;top:759.00px;font:bold 11.5px/11.5px 'Liberation Sans', sans-serif;color:#000;transform:scaleX(0.9829);">Settings</span>
<div class="r" style="left:240px;top:557px;width:17px;height:215px;background:#f0f0f0;"></div>
<div class="r" style="left:241.5px;top:574px;width:14px;height:144px;background:#cdcdcd;"></div>
<svg class="r" style="left:244px;top:561px;" width="9" height="7" viewBox="0 0 9 7"><path d="M0.8 5.8L4.5 1.8L8.2 5.8" fill="none" stroke="#505050" stroke-width="1.7"/></svg>
<div class="r" style="left:257px;top:557px;width:2px;height:215px;background:linear-gradient(90deg,#c8c8c8,#f0f0f0);"></div>
<div class="r" style="left:263px;top:648px;width:677px;height:22px;background:linear-gradient(90deg,#c3cfdf 0%,#cbd8e7 50%,#d8e4f1 100%);"></div>
<div class="r" style="left:263px;top:670px;width:677px;height:1px;background:#6a6a6a;"></div>
<span class="t" style="left:267.70px;top:654.00px;font:normal 12.5px/12.5px 'Liberation Sans', sans-serif;color:#000;transform:scaleX(1.0015);">Data View</span>
<svg class="r" style="left:912px;top:655px;" width="8" height="10" viewBox="0 0 8 10"><rect x="1.5" y="0.5" width="4" height="5" fill="none" stroke="#000" stroke-width="1"/><rect x="4" y="0" width="2" height="6" fill="#000"/><rect x="0" y="5.5" width="7.5" height="1" fill="#000"/><rect x="3.2" y="6.5" width="1" height="3.5" fill="#000"/></svg>
<svg class="r" style="left:926.5px;top:655.5px;" width="9" height="8" viewBox="0 0 9 8"><path d="M1 0.5L8 7.5M8 0.5L1 7.5" stroke="#000" stroke-width="1.5"/></svg>
<div class="r" style="left:263px;top:671px;width:2px;height:101px;background:#808080;"></div>
<div class="r" style="left:265px;top:671px;width:2px;height:101px;background:#fff;"></div>
<div class="r" style="left:265px;top:671px;width:675px;height:2px;background:#808080;"></div>
<div class="r" style="left:267px;top:673px;width:652px;height:28px;background:#a9a9a9;"></div>
<span class="t" style="left:275.60px;top:678.00px;font:normal 18.5px/18.5px 'Liberation Sans', sans-serif;color:#fff;transform:scaleX(1.0454);">Imported Body Temperature</span>
<div class="r" style="left:267px;top:701px;width:652px;height:71px;background:#fff;"></div>
<div class="r" style="left:919px;top:673px;width:17px;height:99px;background:#f0f0f0;"></div>
<div class="r" style="left:920.5px;top:708px;width:14px;height:64px;background:#cdcdcd;"></div>
<svg class="r" style="left:922px;top:690px;" width="11" height="9" viewBox="0 0 11 9"><path d="M1 7.5L5.5 2L10 7.5" fill="none" stroke="#505050" stroke-width="1.8"/></svg>
<div class="r" style="left:936px;top:671px;width:1px;height:101px;background:#fff;"></div>
<div class="r" style="left:937px;top:671px;width:2px;height:101px;background:#a0a0a0;"></div>
<div class="r" style="left:939px;top:671px;width:1px;height:101px;background:#e0e0e0;"></div>
<div class="r" style="left:277px;top:718px;width:632px;height:54px;background:#a0a0a0;"></div>
<div class="r" style="left:277px;top:718px;width:468px;height:54px;background:#fff;"></div>
<div class="r" style="left:277px;top:718px;width:20px;height:54px;background:#f0f0f0;"></div>
<div class="r" style="left:297px;top:719px;width:447px;height:18px;background:#f0f0f0;"></div>
<div class="r" style="left:277px;top:718px;width:1px;height:54px;background:#808080;"></div>
<div class="r" style="left:296px;top:718px;width:1px;height:54px;background:#a0a0a0;"></div>
<div class="r" style="left:400px;top:718px;width:1px;height:54px;background:#a0a0a0;"></div>
<div class="r" style="left:515px;top:718px;width:1px;height:54px;background:#a0a0a0;"></div>
<div class="r" style="left:623px;top:718px;width:1px;height:54px;background:#a0a0a0;"></div>
<div class="r" style="left:664px;top:718px;width:1px;height:54px;background:#a0a0a0;"></div>
<div class="r" style="left:744px;top:718px;width:1px;height:54px;background:#808080;"></div>
<div class="r" style="left:277px;top:718px;width:468px;height:1px;background:#808080;"></div>
<div class="r" style="left:277px;top:737px;width:468px;height:1px;background:#a0a0a0;"></div>
<div class="r" style="left:277px;top:756px;width:468px;height:1px;background:#a0a0a0;"></div>
<div class="r" style="left:297px;top:719px;width:103px;height:1px;background:#fff;"></div>
<div class="r" style="left:297px;top:719px;width:1px;height:18px;background:#fff;"></div>
<div class="r" style="left:401px;top:719px;width:114px;height:1px;background:#fff;"></div>
<div class="r" style="left:401px;top:719px;width:1px;height:18px;background:#fff;"></div>
<div class="r" style="left:516px;top:719px;width:107px;height:1px;background:#fff;"></div>
<div class="r" style="left:516px;top:719px;width:1px;height:18px;background:#fff;"></div>
<div class="r" style="left:624px;top:719px;width:40px;height:1px;background:#fff;"></div>
<div class="r" style="left:624px;top:719px;width:1px;height:18px;background:#fff;"></div>
<div class="r" style="left:665px;top:719px;width:79px;height:1px;background:#fff;"></div>
<div class="r" style="left:665px;top:719px;width:1px;height:18px;background:#fff;"></div>
<div class="r" style="left:278px;top:719px;width:18px;height:1px;background:#fff;"></div>
<div class="r" style="left:278px;top:719px;width:1px;height:53px;background:#fff;"></div>
<span class="t" style="left:301.20px;top:722.00px;font:normal 13px/13px 'Liberation Sans', sans-serif;color:#000;transform:scaleX(0.9733);">Source Time (s)</span>
<span class="t" style="left:405.30px;top:722.00px;font:normal 13px/13px 'Liberation Sans', sans-serif;color:#000;transform:scaleX(0.9805);">Source Time Step</span>
<span class="t" style="left:519.60px;top:722.00px;font:normal 13px/13px 'Liberation Sans', sans-serif;color:#000;transform:scaleX(0.9582);">Analysis Time (s)</span>
<span class="t" style="left:627.60px;top:722.00px;font:normal 13px/13px 'Liberation Sans', sans-serif;color:#000;transform:scaleX(0.8985);">Scale</span>
<span class="t" style="left:669.30px;top:722.00px;font:normal 13px/13px 'Liberation Sans', sans-serif;color:#000;transform:scaleX(0.9600);">Offset (Δ°C)</span>
<span class="t" style="left:285.60px;top:741.00px;font:normal 13px/13px 'Liberation Sans', sans-serif;color:#000;transform:scaleX(1.0000);">1</span>
<span class="t" style="left:301.20px;top:741.00px;font:normal 13px/13px 'Liberation Sans', sans-serif;color:#000;transform:scaleX(0.9611);">5.5999998e-003</span>
<span class="t" style="left:405.30px;top:741.00px;font:normal 13px/13px 'Liberation Sans', sans-serif;color:#000;transform:scaleX(0.9246);">56.</span>
<span class="t" style="left:520.00px;top:741.00px;font:normal 13px/13px 'Liberation Sans', sans-serif;color:#000;transform:scaleX(1.0000);">1</span>
<span class="t" style="left:628.30px;top:741.00px;font:normal 13px/13px 'Liberation Sans', sans-serif;color:#000;transform:scaleX(1.0000);">1</span>
<span class="t" style="left:669.50px;top:741.00px;font:normal 13px/13px 'Liberation Sans', sans-serif;color:#000;transform:scaleX(0.8966);">0</span>
<span class="t" style="left:287.30px;top:760.00px;font:normal 13px/13px 'Liberation Sans', sans-serif;color:#000;transform:scaleX(0.8889);">*</span>
<div class="r" style="left:944px;top:648px;width:309px;height:22px;background:linear-gradient(90deg,#c3cfdf 0%,#cbd8e7 50%,#d8e4f1 100%);"></div>
<div class="r" style="left:944px;top:670px;width:309px;height:1px;background:#6a6a6a;"></div>
<span class="t" style="left:948.30px;top:654.00px;font:normal 12.5px/12.5px 'Liberation Sans', sans-serif;color:#000;transform:scaleX(1.0432);">Tabular Data</span>
<div class="r" style="left:944px;top:671px;width:309px;height:101px;background:#a0a0a0;"></div>
<div class="r" style="left:944px;top:671px;width:1px;height:101px;background:#707070;"></div>
<div class="r" style="left:946px;top:671px;width:228px;height:39px;background:#f0f0f0;"></div>
<div class="r" style="left:1009px;top:691px;width:165px;height:18px;background:#e8e6e2;"></div>
<div class="r" style="left:946px;top:671px;width:1px;height:39px;background:#909090;"></div>
<div class="r" style="left:964px;top:671px;width:1px;height:39px;background:#909090;"></div>
<div class="r" style="left:1009px;top:671px;width:1px;height:39px;background:#909090;"></div>
<div class="r" style="left:1066px;top:671px;width:1px;height:39px;background:#909090;"></div>
<div class="r" style="left:1174px;top:671px;width:1px;height:39px;background:#909090;"></div>
<div class="r" style="left:946px;top:671px;width:228px;height:1px;background:#909090;"></div>
<div class="r" style="left:946px;top:690px;width:228px;height:1px;background:#909090;"></div>
<div class="r" style="left:946px;top:709px;width:228px;height:1px;background:#909090;"></div>
<div class="r" style="left:947px;top:672px;width:17px;height:1px;background:#fff;"></div>
<div class="r" style="left:947px;top:672px;width:1px;height:18px;background:#fff;"></div>
<div class="r" style="left:965px;top:672px;width:44px;height:1px;background:#fff;"></div>
<div class="r" style="left:965px;top:672px;width:1px;height:18px;background:#fff;"></div>
<div class="r" style="left:1010px;top:672px;width:56px;height:1px;background:#fff;"></div>
<div class="r" style="left:1010px;top:672px;width:1px;height:18px;background:#fff;"></div>
<div class="r" style="left:1067px;top:672px;width:107px;height:1px;background:#fff;"></div>
<div class="r" style="left:1067px;top:672px;width:1px;height:18px;background:#fff;"></div>
<div class="r" style="left:947px;top:691px;width:17px;height:1px;background:#fff;"></div>
<div class="r" style="left:947px;top:691px;width:1px;height:18px;background:#fff;"></div>
<span class="t" style="left:969.10px;top:675.00px;font:normal 13px/13px 'Liberation Sans', sans-serif;color:#000;transform:scaleX(0.9383);">Steps</span>
<span class="t" style="left:1013.40px;top:675.00px;font:normal 13px/13px 'Liberation Sans', sans-serif;color:#000;transform:scaleX(0.9792);">Time [s]</span>
<span class="t" style="left:1091.50px;top:675.00px;font:normal 13px/13px 'Liberation Sans', sans-serif;color:#c8001e;transform:scaleX(1.0123);">Temperature</span>
<span class="t" style="left:950.90px;top:693.00px;font:normal 13px/13px 'Liberation Sans', sans-serif;color:#000;transform:scaleX(1.0000);">1</span>
<span class="t" style="left:969.50px;top:693.00px;font:normal 13px/13px 'Liberation Sans', sans-serif;color:#000;transform:scaleX(1.0000);">1</span>
<span class="t" style="left:1013.60px;top:693.00px;font:normal 13px/13px 'Liberation Sans', sans-serif;color:#000;transform:scaleX(1.0000);">1.</span>
<span class="t" style="left:1071.80px;top:694.00px;font:normal 13px/13px 'Liberation Sans', sans-serif;color:#000;transform:scaleX(0.8642);">Row_1</span>
<svg class="r" style="left:1071px;top:673px;" width="15" height="15" viewBox="0 0 15 15"><rect x="0" y="0" width="15" height="15" fill="#fff"/><path d="M0.5 14.5V0.5H14.5" fill="none" stroke="#808080"/><path d="M1.5 13.5V1.5H13.5" fill="none" stroke="#404040"/><path d="M3.5 7L6 9.5L11 4.2" fill="none" stroke="#000" stroke-width="2"/></svg>
<div class="r" style="left:263px;top:144px;width:990px;height:2px;background:#5f5f5f;"></div>
<div class="r" style="left:263px;top:144px;width:2px;height:498px;background:#5f5f5f;"></div>
<div class="r" style="left:265px;top:146px;width:988px;height:480px;background:linear-gradient(180deg,#6b8dde 0%,#ffffff 100%);"></div>
<svg class="r" style="left:263px;top:625px;" width="990" height="17" viewBox="0 0 990 17"><rect x="0" y="0" width="990" height="17" fill="#f0f0f0"/>
<path d="M2 0L9 16H68L74.6 0Z" fill="#fff"/>
<path d="M2 0.5H0M74.6 0.5H990" stroke="#000" stroke-width="1" fill="none"/>
<path d="M0 16.5H990" stroke="#000" stroke-width="1"/>
<path d="M2 0L9 16M68 16L74.6 0" stroke="#000" stroke-width="1" fill="none"/>
<path d="M71.3 8L75.4 16M144 16L147.5 8M144.5 0L152 16M229.4 16L236.6 0" stroke="#000" stroke-width="1" fill="none"/></svg>
<div class="r" style="left:263px;top:625px;width:2px;height:17px;background:#5f5f5f;"></div>
<span class="t" style="left:275.20px;top:629.00px;font:bold 11.5px/11.5px 'Liberation Sans', sans-serif;color:#000;transform:scaleX(0.9984);">Geometry</span>
<span class="t" style="left:341.50px;top:629.00px;font:normal 11.5px/11.5px 'Liberation Sans', sans-serif;color:#000;transform:scaleX(0.9305);">Print Preview</span>
<span class="t" style="left:417.70px;top:629.00px;font:normal 11.5px/11.5px 'Liberation Sans', sans-serif;color:#000;transform:scaleX(0.9290);">Report Preview</span>
<div class="r" style="left:263px;top:642px;width:990px;height:6px;background:#f0f0f0;"></div>
<span class="t" style="left:280.90px;top:163.00px;font:bold 13px/13px 'Liberation Sans', sans-serif;color:#000;transform:scaleX(0.9537);">C: Static Structural</span>
<span class="t" style="left:280.90px;top:179.00px;font:normal 13px/13px 'Liberation Sans', sans-serif;color:#000;transform:scaleX(1.0414);">Imported Body Temperature</span>
<span class="t" style="left:280.90px;top:195.00px;font:normal 13px/13px 'Liberation Sans', sans-serif;color:#000;transform:scaleX(0.9635);">Time: 1. s</span>
<span class="t" style="left:280.90px;top:211.00px;font:normal 13px/13px 'Liberation Sans', sans-serif;color:#000;transform:scaleX(0.9480);">Unit: °C</span>
<span class="t" style="left:280.90px;top:227.00px;font:normal 13px/13px 'Liberation Sans', sans-serif;color:#000;transform:scaleX(0.9783);">2022-05-15 20:13</span>
<svg class="r" style="left:280.5px;top:264.5px;" width="18" height="164" viewBox="0 0 18 164"><rect x="0.5" y="0.5" width="17" height="18.1" fill="#ff0000" stroke="#000" stroke-width="1"/><rect x="0.5" y="18.6" width="17" height="17.9" fill="#ffb200" stroke="#000" stroke-width="1"/><rect x="0.5" y="36.5" width="17" height="18.0" fill="#ffff00" stroke="#000" stroke-width="1"/><rect x="0.5" y="54.5" width="17" height="18.0" fill="#b2ff00" stroke="#000" stroke-width="1"/><rect x="0.5" y="72.5" width="17" height="18.0" fill="#00ff00" stroke="#000" stroke-width="1"/><rect x="0.5" y="90.5" width="17" height="17.7" fill="#00ffb2" stroke="#000" stroke-width="1"/><rect x="0.5" y="108.2" width="17" height="18.0" fill="#00ffff" stroke="#000" stroke-width="1"/><rect x="0.5" y="126.2" width="17" height="17.9" fill="#00b2ff" stroke="#000" stroke-width="1"/><rect x="0.5" y="144.1" width="17" height="18.4" fill="#0000ff" stroke="#000" stroke-width="1"/></svg>
<span class="t" style="left:307.70px;top:260.00px;font:bold 12.5px/12.5px 'Liberation Sans', sans-serif;color:#000;transform:scaleX(1.0167);">740.97 Max</span>
<span class="t" style="left:307.70px;top:277.00px;font:normal 12.5px/12.5px 'Liberation Sans', sans-serif;color:#000;transform:scaleX(0.9595);">739.39</span>
<span class="t" style="left:307.70px;top:295.00px;font:normal 12.5px/12.5px 'Liberation Sans', sans-serif;color:#000;transform:scaleX(0.9595);">737.82</span>
<span class="t" style="left:307.70px;top:313.00px;font:normal 12.5px/12.5px 'Liberation Sans', sans-serif;color:#000;transform:scaleX(0.9595);">736.25</span>
<span class="t" style="left:307.70px;top:331.00px;font:normal 12.5px/12.5px 'Liberation Sans', sans-serif;color:#000;transform:scaleX(0.9595);">734.67</span>
<span class="t" style="left:307.70px;top:349.00px;font:normal 12.5px/12.5px 'Liberation Sans', sans-serif;color:#000;transform:scaleX(0.9038);">733.1</span>
<span class="t" style="left:307.70px;top:366.00px;font:normal 12.5px/12.5px 'Liberation Sans', sans-serif;color:#000;transform:scaleX(0.9595);">731.53</span>
<span class="t" style="left:307.70px;top:384.00px;font:normal 12.5px/12.5px 'Liberation Sans', sans-serif;color:#000;transform:scaleX(0.9595);">729.96</span>
<span class="t" style="left:307.70px;top:402.00px;font:normal 12.5px/12.5px 'Liberation Sans', sans-serif;color:#000;transform:scaleX(0.9595);">728.38</span>
<span class="t" style="left:307.70px;top:420.00px;font:bold 12.5px/12.5px 'Liberation Sans', sans-serif;color:#000;transform:scaleX(1.0229);">726.81 Min</span>
<div class="r" style="left:658px;top:583px;width:365px;height:10px;background:#000;"></div>
<div class="r" style="left:749.5px;top:584px;width:90.5px;height:8px;background:#fff;"></div>
<div class="r" style="left:932px;top:584px;width:90px;height:8px;background:#fff;"></div>
<span class="t" style="left:646.50px;top:568.00px;font:normal 12.5px/12.5px 'Liberation Sans', sans-serif;color:#000;transform:scaleX(0.9378);">0.00</span>
<span class="t" style="left:820.90px;top:568.00px;font:normal 12.5px/12.5px 'Liberation Sans', sans-serif;color:#000;transform:scaleX(0.9778);">150.00</span>
<span class="t" style="left:1003.70px;top:568.00px;font:normal 12.5px/12.5px 'Liberation Sans', sans-serif;color:#000;transform:scaleX(0.9947);">300.00 (mm)</span>
<span class="t" style="left:732.80px;top:597.00px;font:normal 12.5px/12.5px 'Liberation Sans', sans-serif;color:#000;transform:scaleX(0.9741);">75.00</span>
<span class="t" style="left:912.70px;top:597.00px;font:normal 12.5px/12.5px 'Liberation Sans', sans-serif;color:#000;transform:scaleX(0.9595);">225.00</span>
<svg class="r" style="left:640px;top:240px;" width="460" height="300" viewBox="0 0 460 300"><defs>
<linearGradient id="gc" gradientUnits="userSpaceOnUse" x1="310" y1="60" x2="297" y2="229">
<stop offset="0" stop-color="#0000ee"/><stop offset="0.47" stop-color="#0000e2"/><stop offset="0.62" stop-color="#0000cc"/><stop offset="0.75" stop-color="#0000a8"/><stop offset="0.85" stop-color="#000068"/><stop offset="0.93" stop-color="#00004a"/><stop offset="1" stop-color="#000046"/></linearGradient>
<linearGradient id="gb" gradientUnits="userSpaceOnUse" x1="120" y1="100" x2="180" y2="290">
<stop offset="0" stop-color="#0000d8"/><stop offset="0.5" stop-color="#0000f0"/><stop offset="1" stop-color="#0000b8"/></linearGradient>
<linearGradient id="gbs" gradientUnits="userSpaceOnUse" x1="198" y1="0" x2="231" y2="0"><stop offset="0" stop-color="#000070" stop-opacity="0"/><stop offset="1" stop-color="#000070" stop-opacity="0.5"/></linearGradient>
</defs>
<path d="M193.0 114.8L306.3 19.3C309.0 17.8 316.5 12.4 322.4 10.5C328.3 8.6 335.4 7.9 341.9 8.0C348.4 8.1 354.8 9.0 361.3 11.2C367.8 13.3 374.2 16.6 380.7 20.9C387.2 25.2 393.6 30.6 400.1 37.1C406.6 43.6 413.7 51.1 419.6 59.7C425.5 68.3 431.7 79.7 435.7 88.9C439.7 98.1 442.1 106.2 443.8 114.8C445.5 123.4 446.1 132.1 446.1 140.7C446.1 149.3 445.5 158.0 443.8 166.6C442.1 175.2 439.2 184.4 435.7 192.5C432.2 200.6 427.7 208.9 422.8 215.1C417.9 221.3 412.0 226.4 406.6 229.7C401.2 232.9 395.8 233.8 390.4 234.6C385.0 235.4 376.9 234.6 374.2 234.6L226.9 223.2Z" fill="url(#gc)"/>
<path d="M134.0 100.0C142.1 99.4 150.0 99.6 160.0 102.0C170.0 104.4 184.4 106.0 193.9 114.2C203.4 122.4 210.8 137.9 216.7 151.2C222.6 164.5 227.8 182.1 229.5 194.0C231.2 205.9 228.8 213.0 226.7 222.5C224.6 232.0 222.2 242.0 216.7 251.0C211.2 260.0 202.9 270.2 193.9 276.6C184.9 283.0 172.5 287.4 162.5 289.5C152.5 291.6 143.5 291.2 134.0 289.5C124.5 287.8 114.5 285.0 105.5 279.5C96.5 274.0 87.0 265.2 79.9 256.7C72.8 248.1 66.7 236.8 62.8 228.2C58.9 219.6 57.2 213.9 56.5 205.4C55.8 196.8 56.5 186.9 58.5 176.9C60.5 166.9 63.5 155.0 68.5 145.5C73.5 136.0 81.3 126.5 88.4 119.9C95.5 113.2 103.6 108.9 111.2 105.6C118.8 102.3 125.9 100.6 134.0 100.0Z" fill="url(#gb)"/>
<path d="M134.0 100.0C142.1 99.4 150.0 99.6 160.0 102.0C170.0 104.4 184.4 106.0 193.9 114.2C203.4 122.4 210.8 137.9 216.7 151.2C222.6 164.5 227.8 182.1 229.5 194.0C231.2 205.9 228.8 213.0 226.7 222.5C224.6 232.0 222.2 242.0 216.7 251.0C211.2 260.0 202.9 270.2 193.9 276.6C184.9 283.0 172.5 287.4 162.5 289.5C152.5 291.6 143.5 291.2 134.0 289.5C124.5 287.8 114.5 285.0 105.5 279.5C96.5 274.0 87.0 265.2 79.9 256.7C72.8 248.1 66.7 236.8 62.8 228.2C58.9 219.6 57.2 213.9 56.5 205.4C55.8 196.8 56.5 186.9 58.5 176.9C60.5 166.9 63.5 155.0 68.5 145.5C73.5 136.0 81.3 126.5 88.4 119.9C95.5 113.2 103.6 108.9 111.2 105.6C118.8 102.3 125.9 100.6 134.0 100.0Z" fill="url(#gbs)"/>
</svg>
<svg class="r" style="left:640px;top:240px;" width="460" height="300" viewBox="0 0 460 300"><defs><clipPath id="cf"><ellipse cx="127.5" cy="193.0" rx="60" ry="78" transform="rotate(-4 127.5 193.0)" fill="#000" /></clipPath>
<filter id="bl" x="-20%" y="-20%" width="140%" height="140%"><feGaussianBlur stdDeviation="0.7"/></filter>
<linearGradient id="sh" gradientUnits="userSpaceOnUse" x1="120" y1="112" x2="132" y2="192"><stop offset="0" stop-color="#001030" stop-opacity="0.55"/><stop offset="0.55" stop-color="#001030" stop-opacity="0.28"/><stop offset="1" stop-color="#001030" stop-opacity="0"/></linearGradient></defs>
<ellipse cx="127.0" cy="197.0" rx="71" ry="93.5" transform="rotate(-3 127.0 197.0)" fill="#000058" />
<ellipse cx="127.5" cy="193.0" rx="62.2" ry="80.2" transform="rotate(-4 127.5 193.0)" fill="#003c55" />
<g clip-path="url(#cf)"><g filter="url(#bl)">
<rect x="60" y="110" width="140" height="170" fill="#00c8c4"/>
<path d="M66.0 200.0C66.0 190.0 67.7 173.0 71.0 162.0C74.3 151.0 79.8 141.2 86.0 134.0C92.2 126.8 101.7 122.0 108.0 119.0C114.3 116.0 124.0 114.5 124.0 116.0C124.0 117.5 113.3 123.3 108.0 128.0C102.7 132.7 96.3 137.3 92.0 144.0C87.7 150.7 84.3 158.7 82.0 168.0C79.7 177.3 78.0 190.3 78.0 200.0C78.0 209.7 79.3 218.3 82.0 226.0C84.7 233.7 89.0 240.3 94.0 246.0C99.0 251.7 105.0 256.2 112.0 260.0C119.0 263.8 128.0 268.5 136.0 269.0C144.0 269.5 157.7 262.5 160.0 263.0C162.3 263.5 155.0 270.3 150.0 272.0C145.0 273.7 137.5 274.2 130.0 273.0C122.5 271.8 112.7 269.5 105.0 265.0C97.3 260.5 89.7 253.2 84.0 246.0C78.3 238.8 74.0 229.7 71.0 222.0C68.0 214.3 66.0 210.0 66.0 200.0Z" fill="#0096e6" /><path d="M80.0 218.0C81.0 214.3 89.3 215.3 94.0 216.0C98.7 216.7 103.0 218.7 108.0 222.0C113.0 225.3 121.0 231.7 124.0 236.0C127.0 240.3 128.0 245.0 126.0 248.0C124.0 251.0 116.3 253.7 112.0 254.0C107.7 254.3 104.0 252.7 100.0 250.0C96.0 247.3 91.3 243.3 88.0 238.0C84.7 232.7 79.0 221.7 80.0 218.0Z" fill="#00e4e4" /><path d="M102.0 200.0C102.3 197.0 109.0 196.0 112.0 198.0C115.0 200.0 117.3 206.7 120.0 212.0C122.7 217.3 128.0 227.0 128.0 230.0C128.0 233.0 123.0 232.3 120.0 230.0C117.0 227.7 113.0 221.0 110.0 216.0C107.0 211.0 101.7 203.0 102.0 200.0Z" fill="#00d8dc" /><path d="M98.0 200.0C97.3 195.0 102.3 192.3 106.0 196.0C109.7 199.7 113.3 213.7 120.0 222.0C126.7 230.3 139.3 240.7 146.0 246.0C152.7 251.3 159.3 252.0 160.0 254.0C160.7 256.0 155.0 259.0 150.0 258.0C145.0 257.0 136.7 253.3 130.0 248.0C123.3 242.7 115.3 234.0 110.0 226.0C104.7 218.0 98.7 205.0 98.0 200.0Z" fill="#00c890" /><path d="M103.0 201.0 L110.0 218.0 L122.0 234.0 L138.0 247.0 L152.0 254.0" fill="none" stroke="#00cc00" stroke-width="4.5" stroke-linecap="round" stroke-linejoin="round"/><path d="M112.0 196.0 L120.0 212.0 L132.0 228.0 L146.0 240.0" fill="none" stroke="#00c840" stroke-width="2.5" stroke-linecap="round" stroke-linejoin="round"/><path d="M132.0 200.0C134.0 196.0 137.7 193.7 142.0 192.0C146.3 190.3 153.7 188.7 158.0 190.0C162.3 191.3 165.7 195.8 168.0 200.0C170.3 204.2 172.3 210.7 172.0 215.0C171.7 219.3 169.0 223.8 166.0 226.0C163.0 228.2 157.7 228.7 154.0 228.0C150.3 227.3 147.0 222.3 144.0 222.0C141.0 221.7 138.3 227.0 136.0 226.0C133.7 225.0 130.7 220.3 130.0 216.0C129.3 211.7 130.0 204.0 132.0 200.0Z" fill="#00c000" /><path d="M126.0 186.0C127.3 183.3 135.3 182.3 140.0 182.0C144.7 181.7 150.7 182.3 154.0 184.0C157.3 185.7 161.3 190.0 160.0 192.0C158.7 194.0 150.7 195.0 146.0 196.0C141.3 197.0 135.3 199.7 132.0 198.0C128.7 196.3 124.7 188.7 126.0 186.0Z" fill="#00b830" /><path d="M156.0 188.0C157.7 184.3 167.3 183.7 172.0 184.0C176.7 184.3 181.3 186.0 184.0 190.0C186.7 194.0 188.3 203.0 188.0 208.0C187.7 213.0 185.0 218.3 182.0 220.0C179.0 221.7 173.3 220.3 170.0 218.0C166.7 215.7 164.3 211.0 162.0 206.0C159.7 201.0 154.3 191.7 156.0 188.0Z" fill="#b4e600" /><path d="M160.0 188.0C162.0 185.7 170.3 185.0 174.0 186.0C177.7 187.0 181.0 190.3 182.0 194.0C183.0 197.7 182.0 205.3 180.0 208.0C178.0 210.7 173.0 211.3 170.0 210.0C167.0 208.7 163.7 203.7 162.0 200.0C160.3 196.3 158.0 190.3 160.0 188.0Z" fill="#f0f000" /><path d="M166.0 188.0C168.7 186.2 178.5 185.7 182.0 187.0C185.5 188.3 188.0 193.5 187.0 196.0C186.0 198.5 179.5 201.7 176.0 202.0C172.5 202.3 167.7 200.3 166.0 198.0C164.3 195.7 163.3 189.8 166.0 188.0Z" fill="#ffa800" /><path d="M166.0 204.0C167.3 202.0 176.7 199.7 180.0 200.0C183.3 200.3 187.3 204.0 186.0 206.0C184.7 208.0 175.3 212.3 172.0 212.0C168.7 211.7 164.7 206.0 166.0 204.0Z" fill="#ff9800" /><path d="M177.0 206.0C178.3 204.8 184.3 204.2 186.0 205.0C187.7 205.8 188.3 209.8 187.0 211.0C185.7 212.2 179.7 212.8 178.0 212.0C176.3 211.2 175.7 207.2 177.0 206.0Z" fill="#ee1000" /><path d="M140.0 204.0 L146.0 214.0 L154.0 222.0" fill="none" stroke="#88c000" stroke-width="2.5" stroke-linecap="round" stroke-linejoin="round"/><path d="M170.0 231.0 L180.0 230.0" fill="none" stroke="#c0a000" stroke-width="1.6" stroke-linecap="round" stroke-linejoin="round"/><path d="M168.0 224.0C170.0 221.7 179.7 220.0 182.0 222.0C184.3 224.0 184.0 233.7 182.0 236.0C180.0 238.3 172.3 238.0 170.0 236.0C167.7 234.0 166.0 226.3 168.0 224.0Z" fill="#20b020" /><path d="M172.0 220.0 L182.0 217.0" fill="none" stroke="#0090e0" stroke-width="2.5" stroke-linecap="round" stroke-linejoin="round"/><path d="M77.0 192.0C77.7 189.7 82.0 188.7 84.0 190.0C86.0 191.3 87.8 196.2 89.0 200.0C90.2 203.8 91.5 210.7 91.0 213.0C90.5 215.3 87.8 215.5 86.0 214.0C84.2 212.5 81.5 207.7 80.0 204.0C78.5 200.3 76.3 194.3 77.0 192.0Z" fill="#0010e0" /><path d="M84.0 164.0C84.5 161.5 89.3 159.7 91.0 161.0C92.7 162.3 94.5 169.5 94.0 172.0C93.5 174.5 89.7 177.3 88.0 176.0C86.3 174.7 83.5 166.5 84.0 164.0Z" fill="#0050e0" /><path d="M157.0 241.0 L166.0 245.0 L175.0 244.0" fill="none" stroke="#0020d8" stroke-width="3" stroke-linecap="round" stroke-linejoin="round"/><path d="M144.0 263.0 L152.0 265.0 L158.0 264.0" fill="none" stroke="#0030d8" stroke-width="2" stroke-linecap="round" stroke-linejoin="round"/><path d="M118.0 190.0 L120.0 196.0" fill="none" stroke="#0040d8" stroke-width="2.5" stroke-linecap="round" stroke-linejoin="round"/><path d="M82.0 162.0C79.7 158.7 84.7 149.7 88.0 144.0C91.3 138.3 97.0 132.0 102.0 128.0C107.0 124.0 113.3 121.3 118.0 120.0C122.7 118.7 130.0 118.0 130.0 120.0C130.0 122.0 121.7 127.3 118.0 132.0C114.3 136.7 110.7 142.7 108.0 148.0C105.3 153.3 106.3 161.7 102.0 164.0C97.7 166.3 84.3 165.3 82.0 162.0Z" fill="#00b4d0" /><path d="M123.0 122.0 L112.0 136.0 L104.0 152.0 L100.0 164.0" fill="none" stroke="#00c000" stroke-width="4" stroke-linecap="round" stroke-linejoin="round"/><path d="M112.0 138.0 L108.0 152.0 L106.0 164.0" fill="none" stroke="#00c000" stroke-width="2.5" stroke-linecap="round" stroke-linejoin="round"/><path d="M124.0 126.0C125.0 123.7 133.7 121.7 138.0 122.0C142.3 122.3 147.0 125.3 150.0 128.0C153.0 130.7 157.0 136.0 156.0 138.0C155.0 140.0 148.0 140.3 144.0 140.0C140.0 139.7 135.3 138.3 132.0 136.0C128.7 133.7 123.0 128.3 124.0 126.0Z" fill="#00a0a8" /><path d="M132.0 141.0C133.7 139.0 139.0 137.5 142.0 138.0C145.0 138.5 149.0 141.0 150.0 144.0C151.0 147.0 150.0 153.7 148.0 156.0C146.0 158.3 140.7 159.0 138.0 158.0C135.3 157.0 133.0 152.8 132.0 150.0C131.0 147.2 130.3 143.0 132.0 141.0Z" fill="#a0c800" /><path d="M145.0 136.0C146.3 134.3 154.5 132.7 158.0 134.0C161.5 135.3 165.7 141.7 166.0 144.0C166.3 146.3 162.7 148.0 160.0 148.0C157.3 148.0 152.5 146.0 150.0 144.0C147.5 142.0 143.7 137.7 145.0 136.0Z" fill="#00a800" /><path d="M130.0 152.0C134.3 152.0 144.0 155.0 150.0 156.0C156.0 157.0 163.3 156.5 166.0 158.0C168.7 159.5 173.0 163.8 166.0 165.0C159.0 166.2 131.0 166.5 124.0 165.0C117.0 163.5 123.0 158.2 124.0 156.0C125.0 153.8 125.7 152.0 130.0 152.0Z" fill="#00cc00" /><path d="M150.0 148.0C150.7 147.0 157.3 147.3 160.0 148.0C162.7 148.7 165.0 150.7 166.0 152.0C167.0 153.3 167.7 155.7 166.0 156.0C164.3 156.3 158.7 155.3 156.0 154.0C153.3 152.7 149.3 149.0 150.0 148.0Z" fill="#ffa000" /><path d="M158.0 150.0C159.0 149.3 164.7 149.2 166.0 150.0C167.3 150.8 167.0 154.3 166.0 155.0C165.0 155.7 161.3 154.8 160.0 154.0C158.7 153.2 157.0 150.7 158.0 150.0Z" fill="#d81800" /><path d="M153.0 157.0C155.0 155.5 163.8 154.7 166.0 156.0C168.2 157.3 168.0 163.5 166.0 165.0C164.0 166.5 156.2 166.3 154.0 165.0C151.8 163.7 151.0 158.5 153.0 157.0Z" fill="#b0e000" /><path d="M136.0 146.0 L140.0 150.0" fill="none" stroke="#00a0c0" stroke-width="2" stroke-linecap="round" stroke-linejoin="round"/></g><rect x="60" y="110" width="140" height="90" fill="url(#sh)"/></g><path d="M132.5 112.5H166.0L172.8 123.0L166.0 133.5H132.5Z" fill="#0000ff" stroke="#000" stroke-width="1"/><path d="M165.5 143.5H203.0L210.5 153.5L203.0 163.5H165.5Z" fill="#ff0000" stroke="#000" stroke-width="1"/><path d="M7.5 164.5H186.3L192.0 175.0L186.3 185.5H7.5Z" fill="#ff3333" stroke="#000" stroke-width="1"/><path d="M211.5 154V177" stroke="#fff" stroke-width="1"/><path d="M242 142.5H253M247.5 137V148" stroke="#b8c4ee" stroke-width="1"/></svg>
<span class="t" style="left:776.70px;top:358.00px;font:normal 13px/13px 'Liberation Sans', sans-serif;color:#fff;transform:scaleX(0.9887);">Min</span>
<span class="t" style="left:809.80px;top:388.00px;font:normal 13px/13px 'Liberation Sans', sans-serif;color:#fff;transform:scaleX(0.9852);">Max</span>
<span class="t" style="left:650.50px;top:410.00px;font:normal 13px/13px 'Liberation Sans', sans-serif;color:#000;transform:scaleX(1.0346);">Imported Body Temperature</span>
</body></html>
